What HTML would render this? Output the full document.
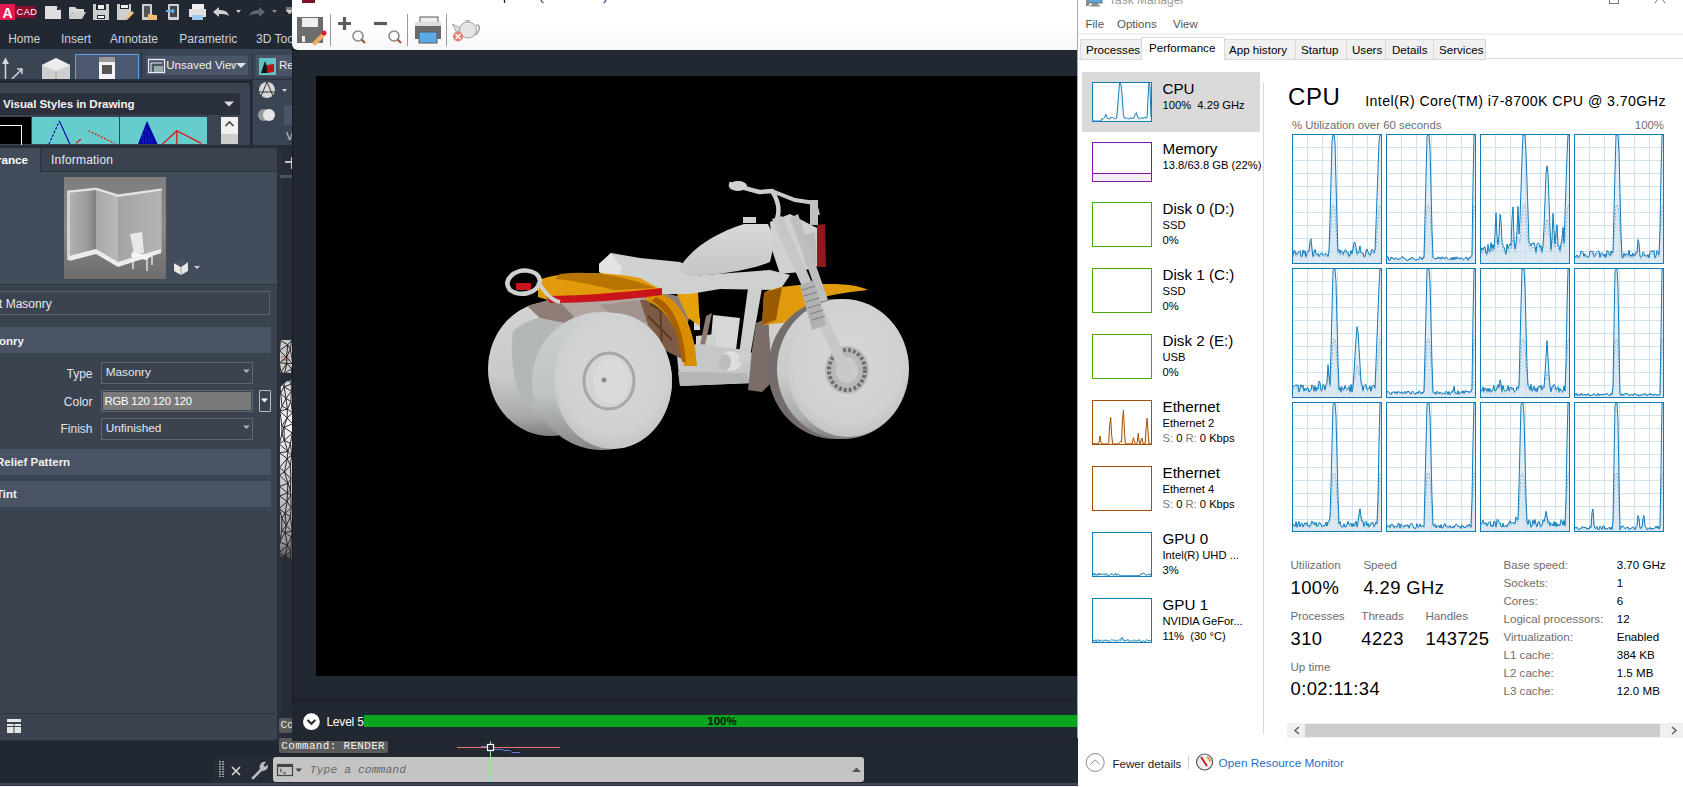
<!DOCTYPE html>
<html><head><meta charset="utf-8">
<style>
*{margin:0;padding:0;box-sizing:border-box}
html,body{width:1683px;height:787px;overflow:hidden;background:#212832;font-family:"Liberation Sans",sans-serif;position:relative}
.a{position:absolute}
.t{position:absolute;white-space:nowrap;line-height:1}
</style></head><body>
<div class="a" style="left:0px;top:0px;width:292px;height:787px;background:#212832;"></div>
<div class="a" style="left:0px;top:4px;width:15px;height:16px;background:#e51a4f;"></div>
<div class="t" style="top:5.6px;font-size:14px;color:#fff;left:2.5px;font-weight:bold;">A</div>
<div class="a" style="left:15px;top:6px;width:20px;height:12px;background:#8a0d2c;"></div>
<div class="t" style="top:8.0px;font-size:9.2px;color:#fff;left:16.5px;letter-spacing:0.5px;">CAD</div>
<svg class="a" style="left:0;top:0" width="300" height="26">
<!-- new -->
<path d="M45 6 H57 L61 10 V19 H45 Z" fill="#dedede"/><path d="M57 6 V10 H61" fill="#212832"/>
<!-- open -->
<path d="M69 7 H75 L77 9 H84 V12 H73 L69 19 Z" fill="#d8d8d8"/><path d="M73 12 H86 L82 19 H69 Z" fill="#cfcfcf"/>
<!-- save -->
<path d="M93 4 H109 V20 H93 Z" fill="#cfcfcf"/><rect x="96" y="4" width="10" height="6" fill="#212832"/><rect x="98" y="5" width="6" height="4" fill="#eee"/><rect x="97" y="15" width="8" height="4" fill="#212832"/><rect x="98" y="16" width="6" height="2" fill="#fff"/>
<!-- save as -->
<path d="M117 4 H131 V14 L126 20 H117 Z" fill="#cfcfcf"/><rect x="120" y="4" width="9" height="5" fill="#212832"/><rect x="121" y="5" width="7" height="3" fill="#eee"/><path d="M125 19 L132 11 L134 13 L127 20 Z" fill="#f0c070"/>
<!-- open from mobile -->
<rect x="142" y="4" width="10" height="16" rx="1" fill="#cfcfcf"/><rect x="144" y="6" width="6" height="11" fill="#555"/><path d="M148 14 H152 L153 15 H157 V20 H148 Z" fill="#f0c070"/>
<!-- save to mobile -->
<rect x="168" y="4" width="11" height="16" rx="1" fill="#cfcfcf"/><rect x="170" y="6" width="7" height="11" fill="#444"/><path d="M166 10 H172 V8 L175 11 L172 14 V12 H166 Z" fill="#5ab4f0"/>
<!-- print -->
<rect x="192" y="4" width="12" height="5" fill="#eee"/><rect x="189" y="9" width="17" height="8" fill="#e0e0e0"/><rect x="192" y="15" width="11" height="5" fill="#9ec8ee"/>
<!-- undo -->
<path d="M213 12 L219 7 V10 C225 10 228 12 229 16 C226 14 223 14 219 14 V17 Z" fill="#cfcfcf"/>
<path d="M236 10 H241 L238.5 13 Z" fill="#cfcfcf"/>
<path d="M265 12 L259 7 V10 C253 10 250 12 249 16 C252 14 255 14 259 14 V17 Z" fill="#5f6672"/>
<path d="M272 10 H277 L274.5 13 Z" fill="#8a909a"/>
<path d="M286 8 H293 M286 10 H293 L289.5 14 Z" stroke="#cfcfcf" fill="#cfcfcf" stroke-width="1"/>
</svg>
<div class="t" style="top:32.7px;font-size:12px;color:#ccd3de;left:8.2px;">Home</div>
<div class="t" style="top:32.7px;font-size:12px;color:#ccd3de;left:61px;">Insert</div>
<div class="t" style="top:32.7px;font-size:12px;color:#ccd3de;left:110px;">Annotate</div>
<div class="t" style="top:32.7px;font-size:12px;color:#ccd3de;left:179.3px;">Parametric</div>
<div class="t" style="top:32.7px;font-size:12px;color:#ccd3de;left:256px;">3D Tools</div>
<div class="a" style="left:0px;top:49px;width:292px;height:31px;background:#3b4453;"></div>
<div class="a" style="left:0px;top:79px;width:292px;height:2px;background:#2a303b;"></div>
<div class="a" style="left:141px;top:52px;width:1px;height:28px;background:#2b313c;"></div>
<div class="a" style="left:253px;top:80px;width:39px;height:65px;background:#3b4453;"></div>
<div class="a" style="left:252px;top:52px;width:1px;height:93px;background:#2b313c;"></div>
<svg class="a" style="left:0;top:49px" width="292" height="30">
<path d="M5.5 30 V12" stroke="#d8d8d8" stroke-width="1.5"/><path d="M2 15 L5.5 8.5 L9 15 Z" fill="#d8d8d8"/>
<path d="M12 30 L21 21 M17 20 H22 V25" stroke="#d8d8d8" stroke-width="1.5" fill="none"/>
<path d="M42 16 L56 9 L70 16 V31 H42 Z" fill="#d0d0d0"/><path d="M42 16 L56 22 L70 16 L56 9 Z" fill="#ececec"/><path d="M56 22 V31" stroke="#9a9a9a"/>
<rect x="75.5" y="5.5" width="63" height="30" fill="#4b5870" stroke="#5aa2e6"/>
<rect x="99" y="8" width="16" height="23" fill="#f4f4f4"/><rect x="99" y="8" width="16" height="5" fill="#999"/><rect x="102" y="16" width="10" height="9" fill="#555"/>
</svg>
<div class="a" style="left:145px;top:55px;width:104px;height:21px;background:#4a5568;border:1px dotted #2e3440"></div>
<svg class="a" style="left:148px;top:58px" width="18" height="16"><rect x="0.5" y="1.5" width="16" height="13" fill="none" stroke="#eee" stroke-width="1.3"/><path d="M3 14 V5 H14" stroke="#eee" fill="none"/><rect x="6" y="8" width="9" height="6" fill="#9aa"/></svg>
<div class="t" style="top:59.7px;font-size:11.5px;color:#eef0f4;left:166.3px;width:70px;overflow:hidden;">Unsaved View</div>
<svg class="a" style="left:236px;top:63px" width="12" height="6"><path d="M0 0 H10 L5 5 Z" fill="#dfe3ea"/></svg>
<div class="a" style="left:256px;top:55px;width:36px;height:21px;background:#4a5568;"></div>
<svg class="a" style="left:259px;top:58px" width="17" height="17"><rect width="17" height="17" fill="#5fc3c8"/><path d="M2 15 L6 3 L10 15 Z" fill="#111"/><path d="M8 7 L15 6 V14 L8 15 Z" fill="#c0141a"/><path d="M8 7 V15" stroke="#333"/></svg>
<div class="t" style="top:59.7px;font-size:11.5px;color:#eef0f4;left:279px;">Re</div>
<div class="a" style="left:-6px;top:83px;width:256px;height:64px;background:#3b4453;border-radius:4px"></div>
<div class="a" style="left:0px;top:93px;width:240px;height:22px;background:#2b313c;border-top-right-radius:2px"></div>
<div class="t" style="top:97.9px;font-size:11.6px;color:#f2f2f2;left:3px;font-weight:bold;letter-spacing:-0.1px;">Visual Styles in Drawing</div>
<svg class="a" style="left:224px;top:101px" width="11" height="7"><path d="M0 0.5 H10 L5 5.5 Z" fill="#d8dce2"/></svg>
<div class="a" style="left:0px;top:117px;width:31px;height:27px;background:#000;"></div>
<div class="a" style="left:-2px;top:125px;width:24px;height:22px;border:1.3px solid #fff"></div>
<svg class="a" style="left:32px;top:117px" width="175" height="27">
<rect x="0" y="0" width="87" height="27" fill="#66cccc"/>
<rect x="88" y="0" width="87" height="27" fill="#66cccc"/>
<path d="M17 27 L27.4 4" stroke="#0000aa" stroke-width="1.1" stroke-dasharray="2.5,1.5"/>
<path d="M27.4 4 L37.8 27" stroke="#0000aa" stroke-width="1.1"/>
<path d="M56.4 13.7 L82.4 26.4" stroke="#e01010" stroke-width="1.2" stroke-dasharray="2,1.5"/>
<path d="M43.8 26.4 L49 22" stroke="#e01010" stroke-width="1.2"/>
<path d="M106 27 L115 4 L125.5 27 Z" fill="#0000aa"/>
<path d="M111 18 V27 M114 12 V27 M117 14 V27 M120 20 V27" stroke="#5a8ad0" stroke-width="0.7" stroke-dasharray="1,1.2"/>
<path d="M130.7 27 L144.8 13.7 L169.3 26.4 M144.8 13.7 V27" stroke="#e01010" stroke-width="1.2" fill="none"/>
</svg>
<div class="a" style="left:221px;top:117px;width:17px;height:27px;background:#f0f0f0;"></div>
<div class="a" style="left:221px;top:134px;width:17px;height:10px;background:#cdcdcd;"></div>
<svg class="a" style="left:224px;top:120px" width="11" height="8"><path d="M1.5 6 L5.5 2 L9.5 6" stroke="#444" stroke-width="1.6" fill="none"/></svg>
<svg class="a" style="left:256px;top:80px" width="36" height="70">
<circle cx="11" cy="10" r="8" fill="#d8d8d8"/><path d="M3 12 H19 M11 2 L5 16 M11 2 L17 16" stroke="#333" stroke-width="1" fill="none"/>
<path d="M26 9 H31 L28.5 12 Z" fill="#cfcfcf"/>
<circle cx="8" cy="35" r="6" fill="#9a9a9a"/><circle cx="13" cy="35" r="6" fill="#e6e6e6"/>
<rect x="28" y="25" width="8" height="20" fill="#4b5568"/>
</svg>
<div class="t" style="top:130.7px;font-size:11px;color:#c8d0dc;left:286px;">V</div>
<div class="a" style="left:0px;top:145px;width:281px;height:598px;background:#2a303b;border-top-right-radius:5px;border-bottom-right-radius:5px"></div>
<div class="a" style="left:0px;top:148px;width:277px;height:592px;background:#3b4350;border-top-right-radius:4px;border-bottom-right-radius:4px"></div>
<div class="a" style="left:0px;top:148px;width:277px;height:23px;background:#3a4250;border-top-right-radius:4px"></div>
<div class="a" style="left:0px;top:171px;width:277px;height:1px;background:#2c323d;"></div>
<div class="a" style="left:0px;top:148px;width:40px;height:25px;background:#434c5b;"></div>
<div class="a" style="left:40px;top:148px;width:1px;height:24px;background:#2c323d;"></div>
<div class="a" style="left:0px;top:172px;width:277px;height:112px;background:#434c5b;"></div>
<div class="a" style="left:0px;top:284px;width:277px;height:1px;background:#2f3540;"></div>
<div class="t" style="top:154.4px;font-size:11.6px;color:#ffffff;left:-3px;font-weight:bold;">rance</div>
<div class="t" style="top:154.0px;font-size:12px;color:#e6e8ec;left:51px;letter-spacing:0.2px;">Information</div>
<svg class="a" style="left:64px;top:177px" width="102" height="102">
<defs><linearGradient id="fl" x1="0" y1="0" x2="0" y2="1"><stop offset="0" stop-color="#7e7e7e"/><stop offset="0.5" stop-color="#8a8a8a"/><stop offset="1" stop-color="#6c6c6c"/></linearGradient>
<linearGradient id="w1" x1="0" y1="0" x2="1" y2="0"><stop offset="0" stop-color="#b4b4b4"/><stop offset="0.7" stop-color="#9c9c9c"/><stop offset="1" stop-color="#7e7e7e"/></linearGradient>
<linearGradient id="w2" x1="0" y1="0" x2="1" y2="0"><stop offset="0" stop-color="#a8a8a8"/><stop offset="1" stop-color="#b8b8b8"/></linearGradient>
<linearGradient id="w3" x1="0" y1="0" x2="1" y2="0"><stop offset="0" stop-color="#a4a4a4"/><stop offset="1" stop-color="#b4b4b4"/></linearGradient></defs>
<rect width="102" height="102" fill="url(#fl)"/>
<path d="M3 13.7 L32 10.7 V76 L5.3 83 Z" fill="url(#w1)"/>
<path d="M32 10.7 L54 17.5 V89 L32 76 Z" fill="url(#w2)"/>
<path d="M54 17.5 L97.6 11.4 V76 L54 89 Z" fill="url(#w3)"/>
<path d="M3 13.7 L32 10.7 L54 17.5 L97.6 11.4 L97.6 13.5 L54 20 L32 13 L3 16 Z" fill="#e4e4e4"/>
<path d="M3 14 V83 H6 V16 Z" fill="#d4d4d4"/>
<path d="M5 79 L32 72 L54 85 L97 72 V76 L54 90 L32 77 L5.3 84 Z" fill="#ececec"/>
<path d="M66 57 L78 55 L80 76 L70 77 Z" fill="#e8e8e8"/>
<path d="M68 75 L88 79 L82 83 L67 80 Z" fill="#f4f4f4"/>
<path d="M69 80 V92 M83 82 V94 M88 79 V88" stroke="#f0f0f0" stroke-width="1.3"/>
</svg>
<svg class="a" style="left:173px;top:258px" width="30" height="18"><path d="M1 5 L8 9 L15 4 V13 L8 17 L1 13 Z" fill="#e8e8e8"/><path d="M8 9 V17" stroke="#9a9a9a"/><path d="M1 5 L8 2 L15 4 L8 9 Z" fill="#4a5364"/><path d="M21 8 H27 L24 11 Z" fill="#cfcfcf"/></svg>
<div class="a" style="left:-2px;top:291px;width:272px;height:24px;border:1px solid #5a6272"></div>
<div class="t" style="top:298.3px;font-size:12px;color:#e6e8ec;left:-1px;">t Masonry</div>
<div class="a" style="left:0px;top:327px;width:271px;height:26px;background:#4a5364;"></div>
<div class="t" style="top:336.1px;font-size:11.5px;color:#f2f2f2;left:-1px;font-weight:bold;">onry</div>
<div class="t" style="top:368.0px;font-size:12px;color:#e0e3e8;right:1590.5px;">Type</div>
<div class="t" style="top:395.5px;font-size:12px;color:#e0e3e8;right:1590.5px;">Color</div>
<div class="t" style="top:423.3px;font-size:12px;color:#e0e3e8;right:1590.5px;">Finish</div>
<div class="a" style="left:101px;top:362px;width:152px;height:22px;border:1px solid #5f6776"></div>
<div class="t" style="top:367.2px;font-size:11.8px;color:#e6e8ec;left:105.7px;">Masonry</div>
<div class="a" style="left:101px;top:390px;width:152px;height:22px;border:1px solid #5f6776;background:#3b4350"></div>
<div class="a" style="left:103px;top:392px;width:148px;height:18px;background:#7a7a7a;"></div>
<div class="t" style="top:396.4px;font-size:11.3px;color:#fff;left:104.5px;letter-spacing:-0.2px;">RGB 120 120 120</div>
<div class="a" style="left:258.5px;top:390px;width:12px;height:22px;border:1px solid #b8bcc4;border-radius:1px"></div>
<svg class="a" style="left:258px;top:397px" width="13" height="8"><path d="M3 1.5 H10 L6.5 5.5 Z" fill="#fff"/></svg>
<div class="a" style="left:101px;top:418px;width:152px;height:22px;border:1px solid #5f6776"></div>
<div class="t" style="top:423.0px;font-size:11.8px;color:#e6e8ec;left:105.7px;">Unfinished</div>
<svg class="a" style="left:243px;top:369px" width="8" height="5"><path d="M0 0.5 H7 L3.5 4 Z" fill="#a8acb4"/></svg>
<svg class="a" style="left:243px;top:425px" width="8" height="5"><path d="M0 0.5 H7 L3.5 4 Z" fill="#a8acb4"/></svg>
<div class="a" style="left:0px;top:449px;width:271px;height:26px;background:#4a5364;"></div>
<div class="t" style="top:457.3px;font-size:11.5px;color:#f2f2f2;left:-4px;font-weight:bold;">Relief Pattern</div>
<div class="a" style="left:0px;top:481px;width:271px;height:26px;background:#4a5364;"></div>
<div class="t" style="top:489.3px;font-size:11.5px;color:#f2f2f2;left:-4px;font-weight:bold;">Tint</div>
<div class="a" style="left:0px;top:713px;width:274px;height:1px;background:#2f3540;"></div>
<svg class="a" style="left:6px;top:718px" width="16" height="16"><rect x="1" y="1" width="14" height="3" fill="#e6e6e6"/><rect x="1" y="6" width="14" height="9" fill="#e6e6e6"/><path d="M8 6 V15 M1 8.5 H15" stroke="#3b4350" stroke-width="1"/></svg>
<div class="a" style="left:281px;top:145px;width:11px;height:597px;background:#262d38;"></div>
<svg class="a" style="left:284px;top:156px" width="9" height="14"><path d="M1 6 H8 M8 1 V13" stroke="#f0f0f0" stroke-width="1.6"/></svg>
<div class="a" style="left:280px;top:175px;width:12px;height:3px;background:#4a5364;"></div>
<svg class="a" style="left:280px;top:340px" width="12" height="220"><defs><linearGradient id="wg" x1="0" y1="0" x2="0" y2="1"><stop offset="0" stop-color="#d8d8d8"/><stop offset="0.25" stop-color="#f4f4f4"/><stop offset="0.6" stop-color="#c8c8c8"/><stop offset="0.9" stop-color="#9a9a9a"/><stop offset="1" stop-color="#555"/></linearGradient></defs><rect x="0" y="0" width="12" height="33" fill="#c9c9c9"/><path d="M1 17 H9 M2 20 H10" stroke="#b06050" stroke-width="1.2"/><path d="M0 48 Q3 42 12 40 V219 L0 216 Z" fill="url(#wg)"/><clipPath id="wc1"><rect x="0" y="0" width="12" height="33"/></clipPath><clipPath id="wc2"><path d="M0 48 Q3 42 12 40 V219 L0 216 Z"/></clipPath><g clip-path="url(#wc1)"><path d="M0.4 0.4 L-0.4 10.6 M7.7 4.8 L6.5 17.3 M11.5 0.5 L10.3 9.3 M0.4 0.4 L7.7 4.8 L11.5 0.5 M7.7 4.8 L-0.4 10.6 M7.7 4.8 L10.3 9.3 M-0.4 10.6 L-0.7 22.9 M6.5 17.3 L6.8 23.3 M10.3 9.3 L12.9 23.8 M-0.4 10.6 L6.5 17.3 L10.3 9.3 M6.5 17.3 L-0.7 22.9 M6.5 17.3 L12.9 23.8 M-0.7 22.9 L1.0 32.2 M6.8 23.3 L4.6 33.6 M12.9 23.8 L11.6 28.9 M-0.7 22.9 L6.8 23.3 L12.9 23.8 M6.8 23.3 L1.0 32.2 M6.8 23.3 L11.6 28.9 M1.0 32.2 L-0.4 40.5 M4.6 33.6 L4.1 46.8 M11.6 28.9 L11.3 44.1 M1.0 32.2 L4.6 33.6 L11.6 28.9 M4.6 33.6 L-0.4 40.5 M4.6 33.6 L11.3 44.1 M-0.4 40.5 L0.6 53.3 M4.1 46.8 L6.0 58.5 M11.3 44.1 L11.4 51.2 M-0.4 40.5 L4.1 46.8 L11.3 44.1 M4.1 46.8 L0.6 53.3 M4.1 46.8 L11.4 51.2 M0.6 53.3 L2.0 66.0 M6.0 58.5 L7.4 69.2 M11.4 51.2 L10.9 61.4 M0.6 53.3 L6.0 58.5 L11.4 51.2 M6.0 58.5 L2.0 66.0 M6.0 58.5 L10.9 61.4 M2.0 66.0 L-0.1 70.9 M7.4 69.2 L7.1 77.9 M10.9 61.4 L12.5 72.8 M2.0 66.0 L7.4 69.2 L10.9 61.4 M7.4 69.2 L-0.1 70.9 M7.4 69.2 L12.5 72.8 M-0.1 70.9 L1.9 86.1 M7.1 77.9 L4.0 87.3 M12.5 72.8 L12.7 83.8 M-0.1 70.9 L7.1 77.9 L12.5 72.8 M7.1 77.9 L1.9 86.1 M7.1 77.9 L12.7 83.8 M1.9 86.1 L1.9 93.9 M4.0 87.3 L4.3 100.3 M12.7 83.8 L12.3 93.1 M1.9 86.1 L4.0 87.3 L12.7 83.8 M4.0 87.3 L1.9 93.9 M4.0 87.3 L12.3 93.1 M1.9 93.9 L-0.7 104.0 M4.3 100.3 L7.9 111.5 M12.3 93.1 L10.4 103.5 M1.9 93.9 L4.3 100.3 L12.3 93.1 M4.3 100.3 L-0.7 104.0 M4.3 100.3 L10.4 103.5 M-0.7 104.0 L-0.7 112.9 M7.9 111.5 L7.2 118.6 M10.4 103.5 L11.7 115.2 M-0.7 104.0 L7.9 111.5 L10.4 103.5 M7.9 111.5 L-0.7 112.9 M7.9 111.5 L11.7 115.2 M-0.7 112.9 L-0.4 127.4 M7.2 118.6 L4.5 131.9 M11.7 115.2 L10.3 125.5 M-0.7 112.9 L7.2 118.6 L11.7 115.2 M7.2 118.6 L-0.4 127.4 M7.2 118.6 L10.3 125.5 M-0.4 127.4 L-0.4 135.1 M4.5 131.9 L7.9 143.3 M10.3 125.5 L10.9 138.8 M-0.4 127.4 L4.5 131.9 L10.3 125.5 M4.5 131.9 L-0.4 135.1 M4.5 131.9 L10.9 138.8 M-0.4 135.1 L-0.4 146.4 M7.9 143.3 L7.4 152.9 M10.9 138.8 L10.3 149.9 M-0.4 135.1 L7.9 143.3 L10.9 138.8 M7.9 143.3 L-0.4 146.4 M7.9 143.3 L10.3 149.9 M-0.4 146.4 L-0.4 156.0 M7.4 152.9 L7.1 161.5 M10.3 149.9 L10.9 154.9 M-0.4 146.4 L7.4 152.9 L10.3 149.9 M7.4 152.9 L-0.4 156.0 M7.4 152.9 L10.9 154.9 M-0.4 156.0 L-0.7 168.5 M7.1 161.5 L5.0 173.6 M10.9 154.9 L11.1 167.7 M-0.4 156.0 L7.1 161.5 L10.9 154.9 M7.1 161.5 L-0.7 168.5 M7.1 161.5 L11.1 167.7 M-0.7 168.5 L1.9 178.4 M5.0 173.6 L6.3 185.7 M11.1 167.7 L10.5 176.4 M-0.7 168.5 L5.0 173.6 L11.1 167.7 M5.0 173.6 L1.9 178.4 M5.0 173.6 L10.5 176.4 M1.9 178.4 L1.7 190.9 M6.3 185.7 L5.0 192.1 M10.5 176.4 L12.2 191.6 M1.9 178.4 L6.3 185.7 L10.5 176.4 M6.3 185.7 L1.7 190.9 M6.3 185.7 L12.2 191.6 M1.7 190.9 L-0.4 202.2 M5.0 192.1 L7.5 205.1 M12.2 191.6 L11.3 197.1 M1.7 190.9 L5.0 192.1 L12.2 191.6 M5.0 192.1 L-0.4 202.2 M5.0 192.1 L11.3 197.1 M-0.4 202.2 L-0.9 212.8 M7.5 205.1 L5.0 216.2 M11.3 197.1 L10.8 211.9 M-0.4 202.2 L7.5 205.1 L11.3 197.1 M7.5 205.1 L-0.9 212.8 M7.5 205.1 L10.8 211.9 M-0.9 212.8 L0.8 219.3 M5.0 216.2 L4.7 226.8 M10.8 211.9 L10.2 218.9 M-0.9 212.8 L5.0 216.2 L10.8 211.9 M5.0 216.2 L0.8 219.3 M5.0 216.2 L10.2 218.9 " stroke="#151515" stroke-width="0.9" fill="none"/></g><g clip-path="url(#wc2)"><path d="M0.4 0.4 L-0.4 10.6 M7.7 4.8 L6.5 17.3 M11.5 0.5 L10.3 9.3 M0.4 0.4 L7.7 4.8 L11.5 0.5 M7.7 4.8 L-0.4 10.6 M7.7 4.8 L10.3 9.3 M-0.4 10.6 L-0.7 22.9 M6.5 17.3 L6.8 23.3 M10.3 9.3 L12.9 23.8 M-0.4 10.6 L6.5 17.3 L10.3 9.3 M6.5 17.3 L-0.7 22.9 M6.5 17.3 L12.9 23.8 M-0.7 22.9 L1.0 32.2 M6.8 23.3 L4.6 33.6 M12.9 23.8 L11.6 28.9 M-0.7 22.9 L6.8 23.3 L12.9 23.8 M6.8 23.3 L1.0 32.2 M6.8 23.3 L11.6 28.9 M1.0 32.2 L-0.4 40.5 M4.6 33.6 L4.1 46.8 M11.6 28.9 L11.3 44.1 M1.0 32.2 L4.6 33.6 L11.6 28.9 M4.6 33.6 L-0.4 40.5 M4.6 33.6 L11.3 44.1 M-0.4 40.5 L0.6 53.3 M4.1 46.8 L6.0 58.5 M11.3 44.1 L11.4 51.2 M-0.4 40.5 L4.1 46.8 L11.3 44.1 M4.1 46.8 L0.6 53.3 M4.1 46.8 L11.4 51.2 M0.6 53.3 L2.0 66.0 M6.0 58.5 L7.4 69.2 M11.4 51.2 L10.9 61.4 M0.6 53.3 L6.0 58.5 L11.4 51.2 M6.0 58.5 L2.0 66.0 M6.0 58.5 L10.9 61.4 M2.0 66.0 L-0.1 70.9 M7.4 69.2 L7.1 77.9 M10.9 61.4 L12.5 72.8 M2.0 66.0 L7.4 69.2 L10.9 61.4 M7.4 69.2 L-0.1 70.9 M7.4 69.2 L12.5 72.8 M-0.1 70.9 L1.9 86.1 M7.1 77.9 L4.0 87.3 M12.5 72.8 L12.7 83.8 M-0.1 70.9 L7.1 77.9 L12.5 72.8 M7.1 77.9 L1.9 86.1 M7.1 77.9 L12.7 83.8 M1.9 86.1 L1.9 93.9 M4.0 87.3 L4.3 100.3 M12.7 83.8 L12.3 93.1 M1.9 86.1 L4.0 87.3 L12.7 83.8 M4.0 87.3 L1.9 93.9 M4.0 87.3 L12.3 93.1 M1.9 93.9 L-0.7 104.0 M4.3 100.3 L7.9 111.5 M12.3 93.1 L10.4 103.5 M1.9 93.9 L4.3 100.3 L12.3 93.1 M4.3 100.3 L-0.7 104.0 M4.3 100.3 L10.4 103.5 M-0.7 104.0 L-0.7 112.9 M7.9 111.5 L7.2 118.6 M10.4 103.5 L11.7 115.2 M-0.7 104.0 L7.9 111.5 L10.4 103.5 M7.9 111.5 L-0.7 112.9 M7.9 111.5 L11.7 115.2 M-0.7 112.9 L-0.4 127.4 M7.2 118.6 L4.5 131.9 M11.7 115.2 L10.3 125.5 M-0.7 112.9 L7.2 118.6 L11.7 115.2 M7.2 118.6 L-0.4 127.4 M7.2 118.6 L10.3 125.5 M-0.4 127.4 L-0.4 135.1 M4.5 131.9 L7.9 143.3 M10.3 125.5 L10.9 138.8 M-0.4 127.4 L4.5 131.9 L10.3 125.5 M4.5 131.9 L-0.4 135.1 M4.5 131.9 L10.9 138.8 M-0.4 135.1 L-0.4 146.4 M7.9 143.3 L7.4 152.9 M10.9 138.8 L10.3 149.9 M-0.4 135.1 L7.9 143.3 L10.9 138.8 M7.9 143.3 L-0.4 146.4 M7.9 143.3 L10.3 149.9 M-0.4 146.4 L-0.4 156.0 M7.4 152.9 L7.1 161.5 M10.3 149.9 L10.9 154.9 M-0.4 146.4 L7.4 152.9 L10.3 149.9 M7.4 152.9 L-0.4 156.0 M7.4 152.9 L10.9 154.9 M-0.4 156.0 L-0.7 168.5 M7.1 161.5 L5.0 173.6 M10.9 154.9 L11.1 167.7 M-0.4 156.0 L7.1 161.5 L10.9 154.9 M7.1 161.5 L-0.7 168.5 M7.1 161.5 L11.1 167.7 M-0.7 168.5 L1.9 178.4 M5.0 173.6 L6.3 185.7 M11.1 167.7 L10.5 176.4 M-0.7 168.5 L5.0 173.6 L11.1 167.7 M5.0 173.6 L1.9 178.4 M5.0 173.6 L10.5 176.4 M1.9 178.4 L1.7 190.9 M6.3 185.7 L5.0 192.1 M10.5 176.4 L12.2 191.6 M1.9 178.4 L6.3 185.7 L10.5 176.4 M6.3 185.7 L1.7 190.9 M6.3 185.7 L12.2 191.6 M1.7 190.9 L-0.4 202.2 M5.0 192.1 L7.5 205.1 M12.2 191.6 L11.3 197.1 M1.7 190.9 L5.0 192.1 L12.2 191.6 M5.0 192.1 L-0.4 202.2 M5.0 192.1 L11.3 197.1 M-0.4 202.2 L-0.9 212.8 M7.5 205.1 L5.0 216.2 M11.3 197.1 L10.8 211.9 M-0.4 202.2 L7.5 205.1 L11.3 197.1 M7.5 205.1 L-0.9 212.8 M7.5 205.1 L10.8 211.9 M-0.9 212.8 L0.8 219.3 M5.0 216.2 L4.7 226.8 M10.8 211.9 L10.2 218.9 M-0.9 212.8 L5.0 216.2 L10.8 211.9 M5.0 216.2 L0.8 219.3 M5.0 216.2 L10.2 218.9 " stroke="#151515" stroke-width="0.9" fill="none"/></g></svg>
<div class="a" style="left:279px;top:718px;width:13px;height:15px;background:#595959;border-radius:2px"></div>
<div class="t" style="top:720.2px;font-size:11px;color:#e8e8e8;left:280.5px;font-family:'Liberation Mono',monospace;">Co</div>
<div class="a" style="left:0px;top:741px;width:1078px;height:46px;background:#212832;"></div>
<div class="a" style="left:0px;top:783px;width:1078px;height:2px;background:#3e4555;"></div>
<div class="a" style="left:0px;top:785px;width:1078px;height:1px;background:#313849;"></div>
<div class="a" style="left:0px;top:786px;width:1078px;height:1px;background:#f4f4f4;"></div>
<div class="a" style="left:279px;top:738px;width:109px;height:15px;background:#5b5b5b;border-radius:2px"></div>
<div class="t" style="top:741.4px;font-size:10.9px;color:#f4f4f4;left:281.3px;font-family:'Liberation Mono',monospace;letter-spacing:0.38px;">Command: RENDER</div>
<div class="a" style="left:214px;top:756px;width:59px;height:27px;background:#262c36"></div>
<svg class="a" style="left:214px;top:756px" width="60" height="28">
<path d="M6 5 V21 M9 5 V21" stroke="#c8c8c8" stroke-width="1.5" stroke-dasharray="1.5,1"/>
<path d="M18 11 L26 19 M26 11 L18 19" stroke="#d8d8d8" stroke-width="1.6"/>
<path d="M39 22 L48 13" stroke="#bdbdbd" stroke-width="2.6" stroke-linecap="round"/><path d="M46.5 14.5 C44 10 47 5 52 6 L49.5 9 L51 11 L53.5 8.5 C55 13 51 16 46.5 14.5 Z" fill="#bdbdbd"/>
</svg>
<div class="a" style="left:273px;top:757px;width:591px;height:25px;background:#c4c4c4;border-radius:3px"></div>
<svg class="a" style="left:276px;top:762px" width="30" height="16"><rect x="1.5" y="2.5" width="15" height="11" fill="#c4c4c4" stroke="#444" stroke-width="1.2"/><rect x="1.5" y="2.5" width="15" height="2.5" fill="#444"/><path d="M4 7 L6 8.5 L4 10 M7 11 H10" stroke="#333" stroke-width="1" fill="none"/><path d="M19.5 6.5 H26 L22.75 10 Z" fill="#444"/></svg>
<div class="t" style="top:764.6px;font-size:11.3px;color:#666;left:309.8px;font-family:'Liberation Mono',monospace;font-style:italic;letter-spacing:0.1px;">Type a command</div>
<svg class="a" style="left:851px;top:766px" width="12" height="8"><path d="M1 6 H10 L5.5 1.5 Z" fill="#555"/></svg>
<svg class="a" style="left:450px;top:735px" width="120" height="47"><path d="M7 12.5 H110" stroke="#f07070" stroke-width="1"/><path d="M40.5 6 V47" stroke="#9ae39a" stroke-width="1"/><path d="M31 11.5 H37 M44 14.5 H52 L54 15.5 H60 L62 17.5 H70" stroke="#6a7adf" stroke-width="1"/><rect x="37.5" y="9.5" width="6" height="6" fill="#212832" stroke="#fff" stroke-width="1.2"/></svg>
<div class="a" style="left:292px;top:0px;width:786px;height:741px;background:#212832;"></div>
<div class="a" style="left:292px;top:49px;width:786px;height:652px;border-left:1px dotted #0b0d10;border-bottom:1px dotted #0b0d10;border-top:1px dotted #0b0d10"></div>
<div class="a" style="left:292px;top:0;width:786px;height:50px;background:linear-gradient(#ffffff 0,#ffffff 55%,#fcf9fc 80%,#f6f6f6 100%);border-bottom-left-radius:6px"></div>
<div class="a" style="left:302px;top:0;width:13px;height:3px;background:#7c1224"></div>
<svg class="a" style="left:500px;top:0" width="120" height="4"><path d="M4.5 0 V3" stroke="#3a1050" stroke-width="1.3"/><path d="M41 0 Q41.5 2.5 43.5 3" stroke="#1a3a9a" stroke-width="1.2" fill="none"/><path d="M106 0 Q105.5 2.5 103.5 3" stroke="#1a3a9a" stroke-width="1.2" fill="none"/></svg>
<svg class="a" style="left:292px;top:0" width="200" height="50">
<g>
 <path d="M5 17 H31 V43 H5 Z" fill="#6d6d6d"/>
 <rect x="10" y="18" width="16" height="9" fill="#eeeeee"/>
 <rect x="10" y="36" width="3" height="6" fill="#eeeeee"/>
 <path d="M20 43 L30 33 L33 36 L23 46 Z" fill="#f0b060"/>
 <circle cx="32" cy="33" r="2.5" fill="#e02030"/>
</g>
<rect x="38" y="14" width="1" height="32" fill="#9a9a9a"/>
<path d="M46 23.5 H59 M52.5 17 V30" stroke="#5a5a5a" stroke-width="3.2"/>
<circle cx="66" cy="36" r="5" fill="none" stroke="#8a8a8a" stroke-width="1.6"/>
<path d="M69.5 39.5 L73 43" stroke="#a0522d" stroke-width="2"/>
<path d="M82 23.5 H95" stroke="#5a5a5a" stroke-width="3.2"/>
<circle cx="102" cy="36" r="5" fill="none" stroke="#8a8a8a" stroke-width="1.6"/>
<path d="M105.5 39.5 L109 43" stroke="#a0522d" stroke-width="2"/>
<rect x="115" y="14" width="1" height="32" fill="#9a9a9a"/>
<g>
 <rect x="128" y="17" width="18" height="9" fill="#eeeeee" stroke="#5a5a5a" stroke-width="1"/>
 <rect x="123" y="25" width="26" height="14" fill="#6a6a6a"/>
 <rect x="123" y="22" width="26" height="4" fill="#dddddd"/>
 <rect x="127" y="32" width="18" height="11" fill="#5aaae8" stroke="#5a5a5a"/>
</g>
<rect x="154" y="14" width="1" height="32" fill="#9a9a9a"/>
<g>
 <ellipse cx="176" cy="30" rx="8.5" ry="8" fill="#e6e6e6" stroke="#a0a0a0"/>
 <path d="M168 28 L160.5 24 L166 35 Z" fill="#e0e0e0" stroke="#a0a0a0"/>
 <path d="M184 25 C189 24 188 32 183 35" fill="none" stroke="#a0a0a0" stroke-width="1.5"/>
 <rect x="173" y="20" width="5" height="3" fill="#bbb"/>
 <circle cx="166" cy="36.5" r="5" fill="#e08070"/>
 <path d="M163.5 34 L168.5 39 M168.5 34 L163.5 39" stroke="#fff" stroke-width="1.3"/>
</g>
</svg>
<div class="a" style="left:316px;top:76px;width:762px;height:600px;background:#000;"></div>
<svg class="a" style="left:460px;top:160px" width="480" height="310" viewBox="460 160 480 310">
<defs>
<linearGradient id="tr" x1="0" y1="0" x2="0" y2="1"><stop offset="0" stop-color="#d2d4d4"/><stop offset="0.55" stop-color="#c9cbcb"/><stop offset="0.85" stop-color="#a9abab"/><stop offset="1" stop-color="#7e8080"/></linearGradient>
<linearGradient id="tr2" x1="0" y1="0" x2="0" y2="1"><stop offset="0" stop-color="#cdd0d0"/><stop offset="0.6" stop-color="#c0c3c3"/><stop offset="1" stop-color="#858787"/></linearGradient>
<radialGradient id="wf" cx="0.5" cy="0.42" r="0.62"><stop offset="0" stop-color="#d6d8d8"/><stop offset="0.75" stop-color="#cfd1d1"/><stop offset="0.93" stop-color="#c3c5c5"/><stop offset="1" stop-color="#a8aaaa"/></radialGradient>
<linearGradient id="tank" x1="0" y1="0" x2="0" y2="1"><stop offset="0" stop-color="#d8dada"/><stop offset="1" stop-color="#c4c6c6"/></linearGradient>
</defs>
<!-- back rear wheel -->
<ellipse cx="550" cy="369" rx="62" ry="67" fill="url(#tr)"/>
<path d="M513 331 C530 315 560 312 590 318 L585 420 C560 424 530 412 520 395 C512 375 510 350 513 331 Z" fill="#b4b7b7"/>
<!-- shading under rear fender -->
<polygon points="527,306 548,300 600,298 660,292 695,300 700,330 680,330 640,330 600,328 560,322 540,318" fill="#8e7e77"/>
<polygon points="560,302 640,298 672,300 660,325 600,324 575,318" fill="#b3a6a2"/>
<polygon points="600,305 640,300 655,318 630,330" fill="#a2938e"/>
<!-- engine & lower frame -->
<polygon points="684,336 697,291 747,291 744,354 730,356 700,350" fill="#000"/>
<polygon points="713,315 740,318 736,350 710,350" fill="#d6d8d8"/>
<polygon points="696,336 716,334 716,346 696,348" fill="#cfd1d1"/>
<rect x="694" y="318" width="6" height="12" fill="#d6d8d8"/>
<polygon points="706,316 712,313 704,350 699,350" fill="#8a7a72"/>
<polygon points="676,346 700,344 745,350 760,356 755,383 680,386" fill="#c6c8c8"/>
<polygon points="678,372 746,373 750,383 680,386" fill="#b4b6b6"/>
<ellipse cx="731" cy="361" rx="11" ry="10" fill="#dcdede"/>
<ellipse cx="725" cy="362" rx="6" ry="8" fill="#bcbebe"/>
<!-- rear swing arm (orange curved) -->
<polygon points="640,300 668,300 684,330 684,360 664,350 648,325" fill="#7d5a44"/>
<path d="M650,304 L676,318 M648,316 L672,340 M660,300 L662,352" stroke="#5e3a22" stroke-width="2"/>
<path d="M650,291 C675,292 694,318 697,366 L684,366 C681,334 668,308 645,300 Z" fill="#d88e00"/>
<path d="M656,297 C672,304 683,326 686,362 L682,362 C679,332 668,310 652,301 Z" fill="#a86000"/>
<polygon points="676,292 698,292 700,326 688,318" fill="#e6a00a"/>
<!-- downtube -->
<polygon points="748,288 762,288 749,362 738,362" fill="#cdcfcf"/>
<!-- front frame brown / light area -->
<polygon points="756,323 768,318 772,382 762,392 748,390 752,350" fill="#7b6d68"/>
<polygon points="768,318 800,305 790,380 772,382" fill="#d4cfcc"/>
<!-- front rear wheel -->
<ellipse cx="602" cy="381" rx="70" ry="69" fill="url(#tr2)"/>
<ellipse cx="613" cy="381" rx="59" ry="68" fill="url(#wf)"/>
<ellipse cx="609" cy="381" rx="25" ry="28" fill="none" stroke="#a6a8a8" stroke-width="3"/>
<ellipse cx="611" cy="381" rx="18" ry="23" fill="#d9dbdb"/>
<circle cx="604" cy="380" r="2.5" fill="#8a8c8c"/>
<!-- seat -->
<polygon points="599,264 611,253 640,258 680,262 700,272 690,294 640,292 620,282 599,272" fill="#d0d2d2"/>
<polygon points="611,253 622,268 618,280 599,272 599,264" fill="#e2e4e4"/>
<!-- main frame band under tank -->
<polygon points="640,282 690,276 770,270 790,275 780,290 720,289 690,294 640,294" fill="#cfd1d1"/>
<!-- tank -->
<path d="M678,270 C690,250 712,234 744,224 L768,224 L775,240 L770,262 C750,270 720,275 690,276 Z" fill="url(#tank)"/>
<rect x="743" y="217" width="13" height="6" fill="#cfd1d1"/>
<!-- headstock -->
<polygon points="770,222 790,214 817,228 817,266 800,272 780,274 772,250" fill="#cfd1d1"/><polygon points="800,236 815,232 817,262 806,266" fill="#b9bbbb"/>
<polygon points="817,225 825,224 826,267 817,267" fill="#8e1a20"/>
<!-- rear orange fender + red stripe -->
<path d="M538,280 C560,272 600,270 640,278 L662,290 L640,296 C600,296 570,298 548,300 L538,297 Z" fill="#e09a0c"/>
<path d="M560,274 C590,270 625,276 655,288 L615,290 C590,284 570,280 555,279 Z" fill="#b87400"/>
<path d="M546,296 C585,296 625,292 662,288 L662,295 C625,300 585,303 550,303 Z" fill="#c8141a"/>
<!-- grab handle loop -->
<path d="M511,276 C518,268 538,268 540,281 C538,294 520,297 510,290 C506,285 507,280 511,276 Z" fill="none" stroke="#cfd1d1" stroke-width="4.5"/>
<rect x="516" y="283" width="15" height="7" fill="#c8141a"/>
<path d="M538,282 C545,292 550,300 560,302" stroke="#cfd1d1" stroke-width="4" fill="none"/>
<!-- front fender -->
<path d="M762,325 L764,293 C775,286 800,284 830,284 C848,284 860,286 868,290 C850,292 835,294 824,297 L807,308 L790,322 Z" fill="#e09a0c"/>
<polygon points="764,293 782,287 776,320 762,325" fill="#9a5a00"/>
<!-- front wheel -->
<ellipse cx="835" cy="369" rx="67" ry="70" fill="#736e6b"/>
<ellipse cx="843" cy="369" rx="66" ry="70" fill="url(#tr)"/>
<ellipse cx="848" cy="369" rx="60" ry="68" fill="url(#wf)"/>
<ellipse cx="847" cy="370" rx="22" ry="24" fill="#b8baba"/>
<ellipse cx="847" cy="370" rx="18" ry="20" fill="none" stroke="#6e7070" stroke-width="4" stroke-dasharray="3,2"/>
<ellipse cx="847" cy="370" rx="11" ry="13" fill="#c9cbcb"/>
<!-- fork -->
<polygon points="772,219 782,216 852,372 842,376" fill="#c6c8c8"/>
<polygon points="790,218 798,214 828,300 820,302" fill="#bdbfbf"/>
<polygon points="800,285 814,280 826,325 812,330" fill="#b0b2b2"/>
<path d="M802,290 L815,286 M804,296 L817,292 M806,302 L819,298 M808,308 L821,304 M810,314 L823,310 M812,320 L825,316" stroke="#7a7c7c" stroke-width="1"/>
<!-- handlebar & mirrors -->
<path d="M729,184 C740,186 750,190 760,192 L772,191 C778,200 780,210 777,219" fill="none" stroke="#cdcfcf" stroke-width="4.5"/>
<ellipse cx="738" cy="186" rx="9" ry="5" fill="#d0d2d2"/>
<path d="M772,191 L795,200 L815,203 L818,215" fill="none" stroke="#c8caca" stroke-width="4"/>
<rect x="810" y="200" width="8" height="25" fill="#bfc1c1"/>
</svg>

<div class="a" style="left:292px;top:740px;width:786px;height:1px;background:#1c2129;"></div>
<svg class="a" style="left:302px;top:713px" width="20" height="18"><circle cx="9.4" cy="8.7" r="8.4" fill="#fff"/><path d="M5.5 7 L9.4 10.8 L13.3 7" fill="none" stroke="#212832" stroke-width="2"/></svg>
<div class="t" style="top:715.8px;font-size:12px;color:#fff;left:326.4px;letter-spacing:-0.2px;">Level 5</div>
<div class="a" style="left:364px;top:715px;width:714px;height:12px;background:#0aa51d;"></div>
<div class="t" style="top:716.3px;font-size:11.5px;color:#111;left:722px;font-weight:bold;transform:translateX(-50%);">100%</div>
<div class="a" style="left:1078px;top:0px;width:605px;height:787px;background:#fff;"></div>
<div class="a" style="left:1077px;top:0px;width:1px;height:738px;background:#a9a9a9;"></div>
<svg class="a" style="left:1085px;top:-8px" width="18" height="15" viewBox="0 0 18 15"><rect x="3" y="1" width="14" height="10" fill="#5aa9e6" stroke="#6d6d6d"/><rect x="1" y="2" width="3" height="12" fill="#8a8a8a"/><rect x="7" y="11" width="6" height="2" fill="#8a8a8a"/><rect x="5" y="13" width="10" height="1.5" fill="#8a8a8a"/></svg>
<div class="t" style="top:-6.2px;font-size:12px;color:#9a9a9a;left:1109px;">Task Manager</div>
<svg class="a" style="left:1608px;top:-7px" width="60" height="12"><rect x="1.5" y="1.5" width="9" height="9" fill="none" stroke="#777" stroke-width="1"/><path d="M47 -4 L57 10 M57 -4 L47 10" stroke="#777" stroke-width="1"/></svg>
<div class="t" style="top:18.7px;font-size:11.5px;color:#555;left:1085.5px;">File</div>
<div class="t" style="top:18.7px;font-size:11.5px;color:#555;left:1117px;">Options</div>
<div class="t" style="top:18.7px;font-size:11.5px;color:#555;left:1173px;">View</div>
<div class="a" style="left:1078px;top:33px;width:605px;height:2px;background:#f0f0f0;"></div>
<div class="a" style="left:1078px;top:58px;width:605px;height:1px;background:#d9d9d9;"></div>
<div class="a" style="left:1080px;top:39px;width:62px;height:21px;background:#f0f0f0;border:1px solid #d9d9d9"></div>
<div class="t" style="top:44.2px;font-size:11.6px;color:#000;left:1086px;">Processes</div>
<div class="a" style="left:1141px;top:37px;width:84px;height:23px;background:#fff;border:1px solid #d9d9d9;border-bottom:none"></div>
<div class="t" style="top:42.2px;font-size:11.6px;color:#000;left:1149px;">Performance</div>
<div class="a" style="left:1224px;top:39px;width:72px;height:21px;background:#f0f0f0;border:1px solid #d9d9d9"></div>
<div class="t" style="top:44.2px;font-size:11.6px;color:#000;left:1229px;">App history</div>
<div class="a" style="left:1295px;top:39px;width:52px;height:21px;background:#f0f0f0;border:1px solid #d9d9d9"></div>
<div class="t" style="top:44.2px;font-size:11.6px;color:#000;left:1301px;">Startup</div>
<div class="a" style="left:1346px;top:39px;width:40px;height:21px;background:#f0f0f0;border:1px solid #d9d9d9"></div>
<div class="t" style="top:44.2px;font-size:11.6px;color:#000;left:1352px;">Users</div>
<div class="a" style="left:1385px;top:39px;width:49px;height:21px;background:#f0f0f0;border:1px solid #d9d9d9"></div>
<div class="t" style="top:44.2px;font-size:11.6px;color:#000;left:1392px;">Details</div>
<div class="a" style="left:1433px;top:39px;width:53px;height:21px;background:#f0f0f0;border:1px solid #d9d9d9"></div>
<div class="t" style="top:44.2px;font-size:11.6px;color:#000;left:1439px;">Services</div>
<div class="a" style="left:1082px;top:72px;width:178px;height:60px;background:#d9d9d9;"></div>
<div class="a" style="left:1263px;top:82px;width:1px;height:652px;background:#d9d9d9;"></div>
<div class="a" style="left:1092px;top:82px;width:60px;height:40px;border:1px solid #117dbb;background:#fff"></div>
<div class="t" style="top:80.7px;font-size:15.2px;color:#000;left:1162.5px;">CPU</div>
<div class="t" style="top:100.0px;font-size:11.2px;color:#000;left:1162.5px;">100%&nbsp; 4.29 GHz</div>
<div class="a" style="left:1092px;top:142px;width:60px;height:40px;border:1px solid #8b12ae;background:#fff"></div>
<div class="t" style="top:140.7px;font-size:15.2px;color:#000;left:1162.5px;">Memory</div>
<div class="t" style="top:160.0px;font-size:11.2px;color:#000;left:1162.5px;">13.8/63.8 GB (22%)</div>
<div class="a" style="left:1092px;top:202px;width:60px;height:45px;border:1px solid #4da60c;background:#fff"></div>
<div class="t" style="top:200.7px;font-size:15.2px;color:#000;left:1162.5px;">Disk 0 (D:)</div>
<div class="t" style="top:220.0px;font-size:11.2px;color:#000;left:1162.5px;">SSD</div>
<div class="t" style="top:235.0px;font-size:11.2px;color:#000;left:1162.5px;">0%</div>
<div class="a" style="left:1092px;top:268px;width:60px;height:45px;border:1px solid #4da60c;background:#fff"></div>
<div class="t" style="top:266.7px;font-size:15.2px;color:#000;left:1162.5px;">Disk 1 (C:)</div>
<div class="t" style="top:286.0px;font-size:11.2px;color:#000;left:1162.5px;">SSD</div>
<div class="t" style="top:301.0px;font-size:11.2px;color:#000;left:1162.5px;">0%</div>
<div class="a" style="left:1092px;top:334px;width:60px;height:45px;border:1px solid #4da60c;background:#fff"></div>
<div class="t" style="top:332.7px;font-size:15.2px;color:#000;left:1162.5px;">Disk 2 (E:)</div>
<div class="t" style="top:352.0px;font-size:11.2px;color:#000;left:1162.5px;">USB</div>
<div class="t" style="top:367.0px;font-size:11.2px;color:#000;left:1162.5px;">0%</div>
<div class="a" style="left:1092px;top:400px;width:60px;height:45px;border:1px solid #a74f01;background:#fff"></div>
<div class="t" style="top:398.7px;font-size:15.2px;color:#000;left:1162.5px;">Ethernet</div>
<div class="t" style="top:418.0px;font-size:11.2px;color:#000;left:1162.5px;">Ethernet 2</div>
<div class="t" style="top:433.0px;font-size:11.2px;color:#000;left:1162.5px;"><span style='color:#777'>S:</span> 0 <span style='color:#777'>R:</span> 0 Kbps</div>
<div class="a" style="left:1092px;top:466px;width:60px;height:45px;border:1px solid #a74f01;background:#fff"></div>
<div class="t" style="top:464.7px;font-size:15.2px;color:#000;left:1162.5px;">Ethernet</div>
<div class="t" style="top:484.0px;font-size:11.2px;color:#000;left:1162.5px;">Ethernet 4</div>
<div class="t" style="top:499.0px;font-size:11.2px;color:#000;left:1162.5px;"><span style='color:#777'>S:</span> 0 <span style='color:#777'>R:</span> 0 Kbps</div>
<div class="a" style="left:1092px;top:532px;width:60px;height:45px;border:1px solid #117dbb;background:#fff"></div>
<div class="t" style="top:530.7px;font-size:15.2px;color:#000;left:1162.5px;">GPU 0</div>
<div class="t" style="top:550.0px;font-size:11.2px;color:#000;left:1162.5px;">Intel(R) UHD ...</div>
<div class="t" style="top:565.0px;font-size:11.2px;color:#000;left:1162.5px;">3%</div>
<div class="a" style="left:1092px;top:598px;width:60px;height:45px;border:1px solid #117dbb;background:#fff"></div>
<div class="t" style="top:596.7px;font-size:15.2px;color:#000;left:1162.5px;">GPU 1</div>
<div class="t" style="top:616.0px;font-size:11.2px;color:#000;left:1162.5px;">NVIDIA GeFor...</div>
<div class="t" style="top:631.0px;font-size:11.2px;color:#000;left:1162.5px;">11%&nbsp; (30 °C)</div>
<div class="t" style="top:85.3px;font-size:24px;color:#000;left:1288px;letter-spacing:0.6px;">CPU</div>
<div class="t" style="top:93.5px;font-size:14.2px;color:#000;right:17px;letter-spacing:0.42px;">Intel(R) Core(TM) i7-8700K CPU @ 3.70GHz</div>
<div class="t" style="top:120.1px;font-size:11.4px;color:#6d6d6d;left:1292px;">% Utilization over 60 seconds</div>
<div class="t" style="top:120.1px;font-size:11.4px;color:#6d6d6d;right:19px;">100%</div>
<svg class="a" style="left:1292px;top:134px" width="90" height="130" viewBox="0 0 90 130"><polygon points="1,129 1.0,121.6 2.0,116.1 3.0,116.7 4.0,120.6 5.0,118.8 6.0,119.1 7.0,117.6 8.0,116.5 9.0,121.9 10.0,122.4 11.0,116.2 12.0,119.3 13.0,116.7 14.0,122.6 15.0,119.2 16.0,117.1 17.0,116.7 18.0,106.8 19.0,104.8 20.0,114.7 21.0,122.4 22.0,118.4 23.0,115.4 24.0,119.7 25.0,120.9 26.0,119.4 27.0,122.4 28.0,120.9 29.0,119.2 30.0,118.8 31.0,120.8 32.0,120.8 33.0,120.9 34.0,119.1 35.0,120.4 36.0,122.4 37.0,116.2 38.0,86.3 39.0,46.8 40.0,7.3 41.0,1.0 42.0,1.0 43.0,8.9 44.0,48.4 45.0,87.9 46.0,117.1 47.0,115.4 48.0,119.4 49.0,116.2 50.0,117.5 51.0,120.3 52.0,118.1 53.0,115.8 54.0,116.1 55.0,118.7 56.0,118.1 57.0,122.3 58.0,120.7 59.0,116.5 60.0,119.4 61.0,114.3 62.0,108.5 63.0,108.5 64.0,112.7 65.0,119.7 66.0,119.2 67.0,116.8 68.0,111.9 69.0,118.4 70.0,119.6 71.0,118.8 72.0,122.4 73.0,122.3 74.0,117.2 75.0,115.0 76.0,118.0 77.0,119.6 78.0,121.3 79.0,118.7 80.0,115.1 81.0,116.7 82.0,118.5 83.0,116.0 84.0,90.5 85.0,62.9 86.0,35.3 87.0,7.6 88.0,1.0 89.0,1.0 89,129" fill="#e4eef6" stroke="none"/><polygon points="1,129 1.0,123.1 2.0,118.7 3.0,119.2 4.0,122.3 5.0,120.8 6.0,121.1 7.0,119.9 8.0,119.0 9.0,123.3 10.0,123.7 11.0,118.7 12.0,121.2 13.0,119.2 14.0,123.9 15.0,121.1 16.0,119.4 17.0,119.1 18.0,111.2 19.0,109.6 20.0,117.5 21.0,123.7 22.0,120.6 23.0,118.1 24.0,121.5 25.0,122.5 26.0,121.3 27.0,123.7 28.0,122.5 29.0,121.2 30.0,120.8 31.0,122.4 32.0,122.5 33.0,122.5 34.0,121.1 35.0,122.1 36.0,123.7 37.0,118.7 38.0,109.8 39.0,92.0 40.0,74.2 41.0,71.4 42.0,71.4 43.0,75.0 44.0,92.7 45.0,110.5 46.0,119.5 47.0,118.1 48.0,121.3 49.0,118.8 50.0,119.8 51.0,122.0 52.0,120.3 53.0,118.5 54.0,118.7 55.0,120.8 56.0,120.3 57.0,123.7 58.0,122.4 59.0,119.0 60.0,121.3 61.0,117.2 62.0,112.6 63.0,112.6 64.0,115.9 65.0,121.6 66.0,121.2 67.0,119.3 68.0,115.3 69.0,120.5 70.0,121.5 71.0,120.9 72.0,123.7 73.0,123.6 74.0,119.6 75.0,117.8 76.0,120.2 77.0,121.5 78.0,122.8 79.0,120.8 80.0,117.8 81.0,119.1 82.0,120.6 83.0,118.6 84.0,111.7 85.0,99.3 86.0,86.8 87.0,74.4 88.0,71.4 89.0,71.4 89,129" fill="#dbe8f2" stroke="none"/><g stroke="#c6ddee" stroke-width="1" opacity="0.85"><line x1="15.5" y1="1" x2="15.5" y2="129"/><line x1="30.5" y1="1" x2="30.5" y2="129"/><line x1="45.5" y1="1" x2="45.5" y2="129"/><line x1="60.5" y1="1" x2="60.5" y2="129"/><line x1="75.5" y1="1" x2="75.5" y2="129"/><line x1="1" y1="13.5" x2="89" y2="13.5"/><line x1="1" y1="26.5" x2="89" y2="26.5"/><line x1="1" y1="39.5" x2="89" y2="39.5"/><line x1="1" y1="52.5" x2="89" y2="52.5"/><line x1="1" y1="65.5" x2="89" y2="65.5"/><line x1="1" y1="78.5" x2="89" y2="78.5"/><line x1="1" y1="91.5" x2="89" y2="91.5"/><line x1="1" y1="104.5" x2="89" y2="104.5"/><line x1="1" y1="117.5" x2="89" y2="117.5"/></g><polyline points="1.0,123.1 2.0,118.7 3.0,119.2 4.0,122.3 5.0,120.8 6.0,121.1 7.0,119.9 8.0,119.0 9.0,123.3 10.0,123.7 11.0,118.7 12.0,121.2 13.0,119.2 14.0,123.9 15.0,121.1 16.0,119.4 17.0,119.1 18.0,111.2 19.0,109.6 20.0,117.5 21.0,123.7 22.0,120.6 23.0,118.1 24.0,121.5 25.0,122.5 26.0,121.3 27.0,123.7 28.0,122.5 29.0,121.2 30.0,120.8 31.0,122.4 32.0,122.5 33.0,122.5 34.0,121.1 35.0,122.1 36.0,123.7 37.0,118.7 38.0,109.8 39.0,92.0 40.0,74.2 41.0,71.4 42.0,71.4 43.0,75.0 44.0,92.7 45.0,110.5 46.0,119.5 47.0,118.1 48.0,121.3 49.0,118.8 50.0,119.8 51.0,122.0 52.0,120.3 53.0,118.5 54.0,118.7 55.0,120.8 56.0,120.3 57.0,123.7 58.0,122.4 59.0,119.0 60.0,121.3 61.0,117.2 62.0,112.6 63.0,112.6 64.0,115.9 65.0,121.6 66.0,121.2 67.0,119.3 68.0,115.3 69.0,120.5 70.0,121.5 71.0,120.9 72.0,123.7 73.0,123.6 74.0,119.6 75.0,117.8 76.0,120.2 77.0,121.5 78.0,122.8 79.0,120.8 80.0,117.8 81.0,119.1 82.0,120.6 83.0,118.6 84.0,111.7 85.0,99.3 86.0,86.8 87.0,74.4 88.0,71.4 89.0,71.4" fill="none" stroke="#6fa8d2" stroke-width="0.8" stroke-dasharray="2,1.5"/><polyline points="1.0,121.6 2.0,116.1 3.0,116.7 4.0,120.6 5.0,118.8 6.0,119.1 7.0,117.6 8.0,116.5 9.0,121.9 10.0,122.4 11.0,116.2 12.0,119.3 13.0,116.7 14.0,122.6 15.0,119.2 16.0,117.1 17.0,116.7 18.0,106.8 19.0,104.8 20.0,114.7 21.0,122.4 22.0,118.4 23.0,115.4 24.0,119.7 25.0,120.9 26.0,119.4 27.0,122.4 28.0,120.9 29.0,119.2 30.0,118.8 31.0,120.8 32.0,120.8 33.0,120.9 34.0,119.1 35.0,120.4 36.0,122.4 37.0,116.2 38.0,86.3 39.0,46.8 40.0,7.3 41.0,1.0 42.0,1.0 43.0,8.9 44.0,48.4 45.0,87.9 46.0,117.1 47.0,115.4 48.0,119.4 49.0,116.2 50.0,117.5 51.0,120.3 52.0,118.1 53.0,115.8 54.0,116.1 55.0,118.7 56.0,118.1 57.0,122.3 58.0,120.7 59.0,116.5 60.0,119.4 61.0,114.3 62.0,108.5 63.0,108.5 64.0,112.7 65.0,119.7 66.0,119.2 67.0,116.8 68.0,111.9 69.0,118.4 70.0,119.6 71.0,118.8 72.0,122.4 73.0,122.3 74.0,117.2 75.0,115.0 76.0,118.0 77.0,119.6 78.0,121.3 79.0,118.7 80.0,115.1 81.0,116.7 82.0,118.5 83.0,116.0 84.0,90.5 85.0,62.9 86.0,35.3 87.0,7.6 88.0,1.0 89.0,1.0" fill="none" stroke="#117dbb" stroke-width="1"/><rect x="0.5" y="0.5" width="89" height="129" fill="none" stroke="#117dbb" stroke-width="1"/></svg>
<svg class="a" style="left:1386px;top:134px" width="90" height="130" viewBox="0 0 90 130"><polygon points="1,129 1.0,122.8 2.0,122.8 3.0,126.2 4.0,126.1 5.0,123.2 6.0,123.6 7.0,123.9 8.0,125.3 9.0,124.1 10.0,124.1 11.0,124.2 12.0,125.8 13.0,124.8 14.0,124.9 15.0,123.7 16.0,122.6 17.0,122.8 18.0,124.4 19.0,124.7 20.0,125.4 21.0,126.3 22.0,126.3 23.0,124.7 24.0,125.2 25.0,125.0 26.0,123.0 27.0,124.4 28.0,124.3 29.0,125.5 30.0,126.3 31.0,125.2 32.0,125.9 33.0,124.5 34.0,122.6 35.0,123.8 36.0,125.7 37.0,123.0 38.0,123.4 39.0,84.1 40.0,43.4 41.0,2.6 42.0,1.0 43.0,1.0 44.0,14.0 45.0,54.8 46.0,95.5 47.0,123.5 48.0,123.7 49.0,124.7 50.0,124.4 51.0,124.6 52.0,122.9 53.0,124.5 54.0,123.2 55.0,125.1 56.0,123.0 57.0,123.0 58.0,124.7 59.0,124.3 60.0,122.9 61.0,123.7 62.0,124.6 63.0,125.6 64.0,125.2 65.0,123.8 66.0,125.8 67.0,123.0 68.0,125.4 69.0,122.9 70.0,125.3 71.0,122.8 72.0,123.7 73.0,124.5 74.0,124.5 75.0,123.9 76.0,124.2 77.0,125.2 78.0,125.6 79.0,124.5 80.0,122.9 81.0,124.0 82.0,126.2 83.0,123.3 84.0,123.7 85.0,123.0 86.0,120.7 87.0,49.5 88.0,1.0 89.0,1.0 89,129" fill="#e4eef6" stroke="none"/><polygon points="1,129 1.0,124.0 2.0,124.0 3.0,126.8 4.0,126.7 5.0,124.4 6.0,124.7 7.0,124.9 8.0,126.0 9.0,125.1 10.0,125.1 11.0,125.2 12.0,126.5 13.0,125.6 14.0,125.7 15.0,124.7 16.0,123.9 17.0,124.0 18.0,125.3 19.0,125.6 20.0,126.1 21.0,126.8 22.0,126.9 23.0,125.5 24.0,126.0 25.0,125.8 26.0,124.2 27.0,125.3 28.0,125.2 29.0,126.2 30.0,126.9 31.0,126.0 32.0,126.5 33.0,125.4 34.0,123.9 35.0,124.9 36.0,126.4 37.0,124.2 38.0,124.5 39.0,108.8 40.0,90.5 41.0,72.1 42.0,71.4 43.0,71.4 44.0,77.3 45.0,95.6 46.0,102.2 47.0,124.6 48.0,124.8 49.0,125.5 50.0,125.3 51.0,125.4 52.0,124.1 53.0,125.4 54.0,124.4 55.0,125.9 56.0,124.2 57.0,124.2 58.0,125.5 59.0,125.2 60.0,124.1 61.0,124.7 62.0,125.5 63.0,126.3 64.0,126.0 65.0,124.8 66.0,126.4 67.0,124.2 68.0,126.1 69.0,124.2 70.0,126.0 71.0,124.0 72.0,124.8 73.0,125.4 74.0,125.4 75.0,125.0 76.0,125.1 77.0,126.0 78.0,126.3 79.0,125.4 80.0,124.1 81.0,125.0 82.0,126.7 83.0,124.4 84.0,124.7 85.0,124.2 86.0,122.4 87.0,93.2 88.0,71.4 89.0,71.4 89,129" fill="#dbe8f2" stroke="none"/><g stroke="#c6ddee" stroke-width="1" opacity="0.85"><line x1="15.5" y1="1" x2="15.5" y2="129"/><line x1="30.5" y1="1" x2="30.5" y2="129"/><line x1="45.5" y1="1" x2="45.5" y2="129"/><line x1="60.5" y1="1" x2="60.5" y2="129"/><line x1="75.5" y1="1" x2="75.5" y2="129"/><line x1="1" y1="13.5" x2="89" y2="13.5"/><line x1="1" y1="26.5" x2="89" y2="26.5"/><line x1="1" y1="39.5" x2="89" y2="39.5"/><line x1="1" y1="52.5" x2="89" y2="52.5"/><line x1="1" y1="65.5" x2="89" y2="65.5"/><line x1="1" y1="78.5" x2="89" y2="78.5"/><line x1="1" y1="91.5" x2="89" y2="91.5"/><line x1="1" y1="104.5" x2="89" y2="104.5"/><line x1="1" y1="117.5" x2="89" y2="117.5"/></g><polyline points="1.0,124.0 2.0,124.0 3.0,126.8 4.0,126.7 5.0,124.4 6.0,124.7 7.0,124.9 8.0,126.0 9.0,125.1 10.0,125.1 11.0,125.2 12.0,126.5 13.0,125.6 14.0,125.7 15.0,124.7 16.0,123.9 17.0,124.0 18.0,125.3 19.0,125.6 20.0,126.1 21.0,126.8 22.0,126.9 23.0,125.5 24.0,126.0 25.0,125.8 26.0,124.2 27.0,125.3 28.0,125.2 29.0,126.2 30.0,126.9 31.0,126.0 32.0,126.5 33.0,125.4 34.0,123.9 35.0,124.9 36.0,126.4 37.0,124.2 38.0,124.5 39.0,108.8 40.0,90.5 41.0,72.1 42.0,71.4 43.0,71.4 44.0,77.3 45.0,95.6 46.0,102.2 47.0,124.6 48.0,124.8 49.0,125.5 50.0,125.3 51.0,125.4 52.0,124.1 53.0,125.4 54.0,124.4 55.0,125.9 56.0,124.2 57.0,124.2 58.0,125.5 59.0,125.2 60.0,124.1 61.0,124.7 62.0,125.5 63.0,126.3 64.0,126.0 65.0,124.8 66.0,126.4 67.0,124.2 68.0,126.1 69.0,124.2 70.0,126.0 71.0,124.0 72.0,124.8 73.0,125.4 74.0,125.4 75.0,125.0 76.0,125.1 77.0,126.0 78.0,126.3 79.0,125.4 80.0,124.1 81.0,125.0 82.0,126.7 83.0,124.4 84.0,124.7 85.0,124.2 86.0,122.4 87.0,93.2 88.0,71.4 89.0,71.4" fill="none" stroke="#6fa8d2" stroke-width="0.8" stroke-dasharray="2,1.5"/><polyline points="1.0,122.8 2.0,122.8 3.0,126.2 4.0,126.1 5.0,123.2 6.0,123.6 7.0,123.9 8.0,125.3 9.0,124.1 10.0,124.1 11.0,124.2 12.0,125.8 13.0,124.8 14.0,124.9 15.0,123.7 16.0,122.6 17.0,122.8 18.0,124.4 19.0,124.7 20.0,125.4 21.0,126.3 22.0,126.3 23.0,124.7 24.0,125.2 25.0,125.0 26.0,123.0 27.0,124.4 28.0,124.3 29.0,125.5 30.0,126.3 31.0,125.2 32.0,125.9 33.0,124.5 34.0,122.6 35.0,123.8 36.0,125.7 37.0,123.0 38.0,123.4 39.0,84.1 40.0,43.4 41.0,2.6 42.0,1.0 43.0,1.0 44.0,14.0 45.0,54.8 46.0,95.5 47.0,123.5 48.0,123.7 49.0,124.7 50.0,124.4 51.0,124.6 52.0,122.9 53.0,124.5 54.0,123.2 55.0,125.1 56.0,123.0 57.0,123.0 58.0,124.7 59.0,124.3 60.0,122.9 61.0,123.7 62.0,124.6 63.0,125.6 64.0,125.2 65.0,123.8 66.0,125.8 67.0,123.0 68.0,125.4 69.0,122.9 70.0,125.3 71.0,122.8 72.0,123.7 73.0,124.5 74.0,124.5 75.0,123.9 76.0,124.2 77.0,125.2 78.0,125.6 79.0,124.5 80.0,122.9 81.0,124.0 82.0,126.2 83.0,123.3 84.0,123.7 85.0,123.0 86.0,120.7 87.0,49.5 88.0,1.0 89.0,1.0" fill="none" stroke="#117dbb" stroke-width="1"/><rect x="0.5" y="0.5" width="89" height="129" fill="none" stroke="#117dbb" stroke-width="1"/></svg>
<svg class="a" style="left:1480px;top:134px" width="90" height="130" viewBox="0 0 90 130"><polygon points="1,129 1.0,117.3 2.0,113.8 3.0,115.8 4.0,113.1 5.0,112.8 6.0,119.3 7.0,119.9 8.0,110.4 9.0,117.1 10.0,117.3 11.0,108.6 12.0,114.6 13.0,110.4 14.0,114.6 15.0,100.8 16.0,78.8 17.0,102.8 18.0,110.0 19.0,102.0 20.0,80.4 21.0,86.5 22.0,108.0 23.0,111.3 24.0,113.2 25.0,116.6 26.0,119.7 27.0,110.1 28.0,114.6 29.0,111.8 30.0,109.9 31.0,111.8 32.0,84.7 33.0,72.9 34.0,105.6 35.0,114.9 36.0,109.3 37.0,97.9 38.0,72.5 39.0,100.1 40.0,85.2 41.0,55.1 42.0,25.0 43.0,1.0 44.0,1.0 45.0,1.0 46.0,17.8 47.0,47.9 48.0,78.0 49.0,108.0 50.0,109.6 51.0,112.2 52.0,109.3 53.0,110.2 54.0,108.6 55.0,112.3 56.0,118.2 57.0,110.1 58.0,108.9 59.0,109.6 60.0,113.5 61.0,111.8 62.0,117.6 63.0,110.5 64.0,94.0 65.0,66.9 66.0,39.7 67.0,31.7 68.0,39.7 69.0,66.9 70.0,94.0 71.0,115.3 72.0,104.8 73.0,79.3 74.0,96.6 75.0,110.0 76.0,98.0 77.0,90.7 78.0,111.1 79.0,111.8 80.0,116.2 81.0,109.9 82.0,104.7 83.0,93.3 84.0,108.5 85.0,81.6 86.0,51.5 87.0,21.4 88.0,1.0 89.0,1.0 89,129" fill="#e4eef6" stroke="none"/><polygon points="1,129 1.0,119.6 2.0,116.8 3.0,118.4 4.0,116.3 5.0,116.1 6.0,121.2 7.0,121.7 8.0,114.1 9.0,119.4 10.0,119.7 11.0,112.7 12.0,117.5 13.0,114.1 14.0,117.4 15.0,106.5 16.0,106.4 17.0,108.0 18.0,113.8 19.0,107.4 20.0,107.1 21.0,109.9 22.0,112.2 23.0,114.8 24.0,116.4 25.0,119.1 26.0,121.5 27.0,113.9 28.0,117.5 29.0,115.2 30.0,113.7 31.0,115.3 32.0,109.1 33.0,103.8 34.0,110.3 35.0,117.7 36.0,113.2 37.0,104.1 38.0,103.6 39.0,105.9 40.0,109.3 41.0,95.7 42.0,82.2 43.0,71.4 44.0,71.4 45.0,71.4 46.0,79.0 47.0,92.5 48.0,106.0 49.0,112.2 50.0,113.5 51.0,115.5 52.0,113.3 53.0,113.9 54.0,112.7 55.0,115.6 56.0,120.3 57.0,113.9 58.0,112.9 59.0,113.5 60.0,116.6 61.0,115.3 62.0,119.9 63.0,114.2 64.0,101.0 65.0,101.0 66.0,88.8 67.0,85.2 68.0,88.8 69.0,101.0 70.0,101.0 71.0,118.0 72.0,109.6 73.0,106.6 74.0,103.1 75.0,113.8 76.0,104.2 77.0,98.4 78.0,114.7 79.0,115.2 80.0,118.8 81.0,113.7 82.0,109.5 83.0,100.4 84.0,112.6 85.0,107.7 86.0,94.1 87.0,80.6 88.0,71.4 89.0,71.4 89,129" fill="#dbe8f2" stroke="none"/><g stroke="#c6ddee" stroke-width="1" opacity="0.85"><line x1="15.5" y1="1" x2="15.5" y2="129"/><line x1="30.5" y1="1" x2="30.5" y2="129"/><line x1="45.5" y1="1" x2="45.5" y2="129"/><line x1="60.5" y1="1" x2="60.5" y2="129"/><line x1="75.5" y1="1" x2="75.5" y2="129"/><line x1="1" y1="13.5" x2="89" y2="13.5"/><line x1="1" y1="26.5" x2="89" y2="26.5"/><line x1="1" y1="39.5" x2="89" y2="39.5"/><line x1="1" y1="52.5" x2="89" y2="52.5"/><line x1="1" y1="65.5" x2="89" y2="65.5"/><line x1="1" y1="78.5" x2="89" y2="78.5"/><line x1="1" y1="91.5" x2="89" y2="91.5"/><line x1="1" y1="104.5" x2="89" y2="104.5"/><line x1="1" y1="117.5" x2="89" y2="117.5"/></g><polyline points="1.0,119.6 2.0,116.8 3.0,118.4 4.0,116.3 5.0,116.1 6.0,121.2 7.0,121.7 8.0,114.1 9.0,119.4 10.0,119.7 11.0,112.7 12.0,117.5 13.0,114.1 14.0,117.4 15.0,106.5 16.0,106.4 17.0,108.0 18.0,113.8 19.0,107.4 20.0,107.1 21.0,109.9 22.0,112.2 23.0,114.8 24.0,116.4 25.0,119.1 26.0,121.5 27.0,113.9 28.0,117.5 29.0,115.2 30.0,113.7 31.0,115.3 32.0,109.1 33.0,103.8 34.0,110.3 35.0,117.7 36.0,113.2 37.0,104.1 38.0,103.6 39.0,105.9 40.0,109.3 41.0,95.7 42.0,82.2 43.0,71.4 44.0,71.4 45.0,71.4 46.0,79.0 47.0,92.5 48.0,106.0 49.0,112.2 50.0,113.5 51.0,115.5 52.0,113.3 53.0,113.9 54.0,112.7 55.0,115.6 56.0,120.3 57.0,113.9 58.0,112.9 59.0,113.5 60.0,116.6 61.0,115.3 62.0,119.9 63.0,114.2 64.0,101.0 65.0,101.0 66.0,88.8 67.0,85.2 68.0,88.8 69.0,101.0 70.0,101.0 71.0,118.0 72.0,109.6 73.0,106.6 74.0,103.1 75.0,113.8 76.0,104.2 77.0,98.4 78.0,114.7 79.0,115.2 80.0,118.8 81.0,113.7 82.0,109.5 83.0,100.4 84.0,112.6 85.0,107.7 86.0,94.1 87.0,80.6 88.0,71.4 89.0,71.4" fill="none" stroke="#6fa8d2" stroke-width="0.8" stroke-dasharray="2,1.5"/><polyline points="1.0,117.3 2.0,113.8 3.0,115.8 4.0,113.1 5.0,112.8 6.0,119.3 7.0,119.9 8.0,110.4 9.0,117.1 10.0,117.3 11.0,108.6 12.0,114.6 13.0,110.4 14.0,114.6 15.0,100.8 16.0,78.8 17.0,102.8 18.0,110.0 19.0,102.0 20.0,80.4 21.0,86.5 22.0,108.0 23.0,111.3 24.0,113.2 25.0,116.6 26.0,119.7 27.0,110.1 28.0,114.6 29.0,111.8 30.0,109.9 31.0,111.8 32.0,84.7 33.0,72.9 34.0,105.6 35.0,114.9 36.0,109.3 37.0,97.9 38.0,72.5 39.0,100.1 40.0,85.2 41.0,55.1 42.0,25.0 43.0,1.0 44.0,1.0 45.0,1.0 46.0,17.8 47.0,47.9 48.0,78.0 49.0,108.0 50.0,109.6 51.0,112.2 52.0,109.3 53.0,110.2 54.0,108.6 55.0,112.3 56.0,118.2 57.0,110.1 58.0,108.9 59.0,109.6 60.0,113.5 61.0,111.8 62.0,117.6 63.0,110.5 64.0,94.0 65.0,66.9 66.0,39.7 67.0,31.7 68.0,39.7 69.0,66.9 70.0,94.0 71.0,115.3 72.0,104.8 73.0,79.3 74.0,96.6 75.0,110.0 76.0,98.0 77.0,90.7 78.0,111.1 79.0,111.8 80.0,116.2 81.0,109.9 82.0,104.7 83.0,93.3 84.0,108.5 85.0,81.6 86.0,51.5 87.0,21.4 88.0,1.0 89.0,1.0" fill="none" stroke="#117dbb" stroke-width="1"/><rect x="0.5" y="0.5" width="89" height="129" fill="none" stroke="#117dbb" stroke-width="1"/></svg>
<svg class="a" style="left:1574px;top:134px" width="90" height="130" viewBox="0 0 90 130"><polygon points="1,129 1.0,122.1 2.0,123.1 3.0,120.8 4.0,122.7 5.0,123.4 6.0,120.8 7.0,116.8 8.0,117.7 9.0,118.0 10.0,122.2 11.0,119.8 12.0,121.8 13.0,122.6 14.0,123.1 15.0,122.2 16.0,116.8 17.0,117.5 18.0,117.7 19.0,117.7 20.0,122.4 21.0,121.5 22.0,119.1 23.0,118.3 24.0,117.3 25.0,117.1 26.0,123.2 27.0,119.2 28.0,118.7 29.0,120.0 30.0,122.5 31.0,120.2 32.0,123.2 33.0,116.7 34.0,117.2 35.0,119.7 36.0,121.6 37.0,116.9 38.0,119.5 39.0,117.1 40.0,77.6 41.0,37.7 42.0,1.0 43.0,1.0 44.0,1.0 45.0,18.6 46.0,58.5 47.0,98.3 48.0,123.5 49.0,123.5 50.0,119.1 51.0,121.7 52.0,119.8 53.0,120.3 54.0,121.2 55.0,116.2 56.0,122.4 57.0,120.7 58.0,122.3 59.0,119.0 60.0,121.8 61.0,121.1 62.0,118.1 63.0,118.6 64.0,105.6 65.0,109.2 66.0,122.3 67.0,123.4 68.0,122.1 69.0,118.0 70.0,119.2 71.0,122.1 72.0,121.3 73.0,122.5 74.0,120.4 75.0,123.6 76.0,118.5 77.0,117.0 78.0,116.5 79.0,118.2 80.0,116.5 81.0,123.7 82.0,121.7 83.0,116.5 84.0,117.9 85.0,120.7 86.0,94.8 87.0,39.0 88.0,1.0 89.0,1.0 89,129" fill="#e4eef6" stroke="none"/><polygon points="1,129 1.0,123.5 2.0,124.3 3.0,122.5 4.0,124.0 5.0,124.5 6.0,122.4 7.0,119.3 8.0,120.0 9.0,120.2 10.0,123.5 11.0,121.6 12.0,123.2 13.0,123.8 14.0,124.3 15.0,123.6 16.0,119.2 17.0,119.8 18.0,119.9 19.0,120.0 20.0,123.7 21.0,123.0 22.0,121.1 23.0,120.4 24.0,119.7 25.0,119.5 26.0,124.4 27.0,121.2 28.0,120.8 29.0,121.8 30.0,123.8 31.0,122.0 32.0,124.4 33.0,119.2 34.0,119.6 35.0,121.5 36.0,123.1 37.0,119.3 38.0,121.4 39.0,119.5 40.0,105.9 41.0,87.9 42.0,71.4 43.0,71.4 44.0,71.4 45.0,79.3 46.0,97.3 47.0,104.5 48.0,124.6 49.0,124.6 50.0,121.1 51.0,123.2 52.0,121.6 53.0,122.0 54.0,122.8 55.0,118.8 56.0,123.7 57.0,122.4 58.0,123.7 59.0,121.0 60.0,123.2 61.0,122.7 62.0,120.3 63.0,120.7 64.0,110.2 65.0,113.2 66.0,123.6 67.0,124.5 68.0,123.5 69.0,120.2 70.0,121.1 71.0,123.4 72.0,122.9 73.0,123.8 74.0,122.1 75.0,124.6 76.0,120.6 77.0,119.4 78.0,119.0 79.0,120.4 80.0,119.0 81.0,124.8 82.0,123.1 83.0,119.0 84.0,120.1 85.0,122.4 86.0,101.7 87.0,88.5 88.0,71.4 89.0,71.4 89,129" fill="#dbe8f2" stroke="none"/><g stroke="#c6ddee" stroke-width="1" opacity="0.85"><line x1="15.5" y1="1" x2="15.5" y2="129"/><line x1="30.5" y1="1" x2="30.5" y2="129"/><line x1="45.5" y1="1" x2="45.5" y2="129"/><line x1="60.5" y1="1" x2="60.5" y2="129"/><line x1="75.5" y1="1" x2="75.5" y2="129"/><line x1="1" y1="13.5" x2="89" y2="13.5"/><line x1="1" y1="26.5" x2="89" y2="26.5"/><line x1="1" y1="39.5" x2="89" y2="39.5"/><line x1="1" y1="52.5" x2="89" y2="52.5"/><line x1="1" y1="65.5" x2="89" y2="65.5"/><line x1="1" y1="78.5" x2="89" y2="78.5"/><line x1="1" y1="91.5" x2="89" y2="91.5"/><line x1="1" y1="104.5" x2="89" y2="104.5"/><line x1="1" y1="117.5" x2="89" y2="117.5"/></g><polyline points="1.0,123.5 2.0,124.3 3.0,122.5 4.0,124.0 5.0,124.5 6.0,122.4 7.0,119.3 8.0,120.0 9.0,120.2 10.0,123.5 11.0,121.6 12.0,123.2 13.0,123.8 14.0,124.3 15.0,123.6 16.0,119.2 17.0,119.8 18.0,119.9 19.0,120.0 20.0,123.7 21.0,123.0 22.0,121.1 23.0,120.4 24.0,119.7 25.0,119.5 26.0,124.4 27.0,121.2 28.0,120.8 29.0,121.8 30.0,123.8 31.0,122.0 32.0,124.4 33.0,119.2 34.0,119.6 35.0,121.5 36.0,123.1 37.0,119.3 38.0,121.4 39.0,119.5 40.0,105.9 41.0,87.9 42.0,71.4 43.0,71.4 44.0,71.4 45.0,79.3 46.0,97.3 47.0,104.5 48.0,124.6 49.0,124.6 50.0,121.1 51.0,123.2 52.0,121.6 53.0,122.0 54.0,122.8 55.0,118.8 56.0,123.7 57.0,122.4 58.0,123.7 59.0,121.0 60.0,123.2 61.0,122.7 62.0,120.3 63.0,120.7 64.0,110.2 65.0,113.2 66.0,123.6 67.0,124.5 68.0,123.5 69.0,120.2 70.0,121.1 71.0,123.4 72.0,122.9 73.0,123.8 74.0,122.1 75.0,124.6 76.0,120.6 77.0,119.4 78.0,119.0 79.0,120.4 80.0,119.0 81.0,124.8 82.0,123.1 83.0,119.0 84.0,120.1 85.0,122.4 86.0,101.7 87.0,88.5 88.0,71.4 89.0,71.4" fill="none" stroke="#6fa8d2" stroke-width="0.8" stroke-dasharray="2,1.5"/><polyline points="1.0,122.1 2.0,123.1 3.0,120.8 4.0,122.7 5.0,123.4 6.0,120.8 7.0,116.8 8.0,117.7 9.0,118.0 10.0,122.2 11.0,119.8 12.0,121.8 13.0,122.6 14.0,123.1 15.0,122.2 16.0,116.8 17.0,117.5 18.0,117.7 19.0,117.7 20.0,122.4 21.0,121.5 22.0,119.1 23.0,118.3 24.0,117.3 25.0,117.1 26.0,123.2 27.0,119.2 28.0,118.7 29.0,120.0 30.0,122.5 31.0,120.2 32.0,123.2 33.0,116.7 34.0,117.2 35.0,119.7 36.0,121.6 37.0,116.9 38.0,119.5 39.0,117.1 40.0,77.6 41.0,37.7 42.0,1.0 43.0,1.0 44.0,1.0 45.0,18.6 46.0,58.5 47.0,98.3 48.0,123.5 49.0,123.5 50.0,119.1 51.0,121.7 52.0,119.8 53.0,120.3 54.0,121.2 55.0,116.2 56.0,122.4 57.0,120.7 58.0,122.3 59.0,119.0 60.0,121.8 61.0,121.1 62.0,118.1 63.0,118.6 64.0,105.6 65.0,109.2 66.0,122.3 67.0,123.4 68.0,122.1 69.0,118.0 70.0,119.2 71.0,122.1 72.0,121.3 73.0,122.5 74.0,120.4 75.0,123.6 76.0,118.5 77.0,117.0 78.0,116.5 79.0,118.2 80.0,116.5 81.0,123.7 82.0,121.7 83.0,116.5 84.0,117.9 85.0,120.7 86.0,94.8 87.0,39.0 88.0,1.0 89.0,1.0" fill="none" stroke="#117dbb" stroke-width="1"/><rect x="0.5" y="0.5" width="89" height="129" fill="none" stroke="#117dbb" stroke-width="1"/></svg>
<svg class="a" style="left:1292px;top:268px" width="90" height="130" viewBox="0 0 90 130"><polygon points="1,129 1.0,119.1 2.0,118.2 3.0,117.8 4.0,116.6 5.0,118.2 6.0,116.8 7.0,123.7 8.0,120.3 9.0,116.6 10.0,118.9 11.0,117.0 12.0,123.0 13.0,120.3 14.0,122.0 15.0,119.7 16.0,119.5 17.0,123.8 18.0,122.2 19.0,121.7 20.0,116.8 21.0,118.0 22.0,122.7 23.0,117.8 24.0,122.8 25.0,119.1 26.0,121.0 27.0,113.0 28.0,114.6 29.0,122.3 30.0,122.2 31.0,116.3 32.0,117.2 33.0,121.7 34.0,116.5 35.0,114.1 36.0,96.7 37.0,107.1 38.0,116.7 39.0,82.4 40.0,42.5 41.0,2.6 42.0,1.0 43.0,1.0 44.0,13.8 45.0,53.7 46.0,93.6 47.0,121.6 48.0,119.2 49.0,123.9 50.0,118.7 51.0,121.3 52.0,121.5 53.0,117.6 54.0,120.2 55.0,121.5 56.0,120.2 57.0,118.5 58.0,123.4 59.0,116.4 60.0,123.7 61.0,118.1 62.0,104.8 63.0,88.3 64.0,71.8 65.0,58.6 66.0,63.9 67.0,80.4 68.0,96.8 69.0,113.3 70.0,116.5 71.0,122.4 72.0,118.1 73.0,116.7 74.0,116.6 75.0,121.2 76.0,121.2 77.0,119.9 78.0,117.9 79.0,123.1 80.0,118.1 81.0,117.8 82.0,117.3 83.0,119.8 84.0,94.4 85.0,69.0 86.0,43.7 87.0,18.3 88.0,1.0 89.0,1.0 89,129" fill="#e4eef6" stroke="none"/><polygon points="1,129 1.0,121.1 2.0,120.3 3.0,120.0 4.0,119.1 5.0,120.4 6.0,119.2 7.0,124.7 8.0,122.0 9.0,119.1 10.0,120.9 11.0,119.4 12.0,124.2 13.0,122.0 14.0,123.4 15.0,121.6 16.0,121.4 17.0,124.8 18.0,123.6 19.0,123.2 20.0,119.3 21.0,120.2 22.0,123.9 23.0,120.0 24.0,124.1 25.0,121.1 26.0,122.6 27.0,116.2 28.0,117.5 29.0,123.6 30.0,123.6 31.0,118.9 32.0,119.5 33.0,123.1 34.0,119.0 35.0,117.1 36.0,103.1 37.0,111.5 38.0,119.1 39.0,108.0 40.0,90.1 41.0,72.1 42.0,71.4 43.0,71.4 44.0,77.1 45.0,95.1 46.0,100.6 47.0,123.1 48.0,121.2 49.0,124.9 50.0,120.7 51.0,122.8 52.0,123.0 53.0,119.9 54.0,122.0 55.0,123.0 56.0,121.9 57.0,120.6 58.0,124.6 59.0,118.9 60.0,124.8 61.0,120.3 62.0,109.6 63.0,110.7 64.0,103.3 65.0,97.3 66.0,99.7 67.0,107.1 68.0,103.3 69.0,116.5 70.0,119.0 71.0,123.7 72.0,120.3 73.0,119.2 74.0,119.1 75.0,122.8 76.0,122.7 77.0,121.7 78.0,120.1 79.0,124.2 80.0,120.3 81.0,120.0 82.0,119.6 83.0,121.7 84.0,101.3 85.0,102.0 86.0,90.6 87.0,79.2 88.0,71.4 89.0,71.4 89,129" fill="#dbe8f2" stroke="none"/><g stroke="#c6ddee" stroke-width="1" opacity="0.85"><line x1="15.5" y1="1" x2="15.5" y2="129"/><line x1="30.5" y1="1" x2="30.5" y2="129"/><line x1="45.5" y1="1" x2="45.5" y2="129"/><line x1="60.5" y1="1" x2="60.5" y2="129"/><line x1="75.5" y1="1" x2="75.5" y2="129"/><line x1="1" y1="13.5" x2="89" y2="13.5"/><line x1="1" y1="26.5" x2="89" y2="26.5"/><line x1="1" y1="39.5" x2="89" y2="39.5"/><line x1="1" y1="52.5" x2="89" y2="52.5"/><line x1="1" y1="65.5" x2="89" y2="65.5"/><line x1="1" y1="78.5" x2="89" y2="78.5"/><line x1="1" y1="91.5" x2="89" y2="91.5"/><line x1="1" y1="104.5" x2="89" y2="104.5"/><line x1="1" y1="117.5" x2="89" y2="117.5"/></g><polyline points="1.0,121.1 2.0,120.3 3.0,120.0 4.0,119.1 5.0,120.4 6.0,119.2 7.0,124.7 8.0,122.0 9.0,119.1 10.0,120.9 11.0,119.4 12.0,124.2 13.0,122.0 14.0,123.4 15.0,121.6 16.0,121.4 17.0,124.8 18.0,123.6 19.0,123.2 20.0,119.3 21.0,120.2 22.0,123.9 23.0,120.0 24.0,124.1 25.0,121.1 26.0,122.6 27.0,116.2 28.0,117.5 29.0,123.6 30.0,123.6 31.0,118.9 32.0,119.5 33.0,123.1 34.0,119.0 35.0,117.1 36.0,103.1 37.0,111.5 38.0,119.1 39.0,108.0 40.0,90.1 41.0,72.1 42.0,71.4 43.0,71.4 44.0,77.1 45.0,95.1 46.0,100.6 47.0,123.1 48.0,121.2 49.0,124.9 50.0,120.7 51.0,122.8 52.0,123.0 53.0,119.9 54.0,122.0 55.0,123.0 56.0,121.9 57.0,120.6 58.0,124.6 59.0,118.9 60.0,124.8 61.0,120.3 62.0,109.6 63.0,110.7 64.0,103.3 65.0,97.3 66.0,99.7 67.0,107.1 68.0,103.3 69.0,116.5 70.0,119.0 71.0,123.7 72.0,120.3 73.0,119.2 74.0,119.1 75.0,122.8 76.0,122.7 77.0,121.7 78.0,120.1 79.0,124.2 80.0,120.3 81.0,120.0 82.0,119.6 83.0,121.7 84.0,101.3 85.0,102.0 86.0,90.6 87.0,79.2 88.0,71.4 89.0,71.4" fill="none" stroke="#6fa8d2" stroke-width="0.8" stroke-dasharray="2,1.5"/><polyline points="1.0,119.1 2.0,118.2 3.0,117.8 4.0,116.6 5.0,118.2 6.0,116.8 7.0,123.7 8.0,120.3 9.0,116.6 10.0,118.9 11.0,117.0 12.0,123.0 13.0,120.3 14.0,122.0 15.0,119.7 16.0,119.5 17.0,123.8 18.0,122.2 19.0,121.7 20.0,116.8 21.0,118.0 22.0,122.7 23.0,117.8 24.0,122.8 25.0,119.1 26.0,121.0 27.0,113.0 28.0,114.6 29.0,122.3 30.0,122.2 31.0,116.3 32.0,117.2 33.0,121.7 34.0,116.5 35.0,114.1 36.0,96.7 37.0,107.1 38.0,116.7 39.0,82.4 40.0,42.5 41.0,2.6 42.0,1.0 43.0,1.0 44.0,13.8 45.0,53.7 46.0,93.6 47.0,121.6 48.0,119.2 49.0,123.9 50.0,118.7 51.0,121.3 52.0,121.5 53.0,117.6 54.0,120.2 55.0,121.5 56.0,120.2 57.0,118.5 58.0,123.4 59.0,116.4 60.0,123.7 61.0,118.1 62.0,104.8 63.0,88.3 64.0,71.8 65.0,58.6 66.0,63.9 67.0,80.4 68.0,96.8 69.0,113.3 70.0,116.5 71.0,122.4 72.0,118.1 73.0,116.7 74.0,116.6 75.0,121.2 76.0,121.2 77.0,119.9 78.0,117.9 79.0,123.1 80.0,118.1 81.0,117.8 82.0,117.3 83.0,119.8 84.0,94.4 85.0,69.0 86.0,43.7 87.0,18.3 88.0,1.0 89.0,1.0" fill="none" stroke="#117dbb" stroke-width="1"/><rect x="0.5" y="0.5" width="89" height="129" fill="none" stroke="#117dbb" stroke-width="1"/></svg>
<svg class="a" style="left:1386px;top:268px" width="90" height="130" viewBox="0 0 90 130"><polygon points="1,129 1.0,123.4 2.0,123.3 3.0,124.6 4.0,125.4 5.0,126.4 6.0,123.9 7.0,124.6 8.0,123.5 9.0,125.0 10.0,123.5 11.0,125.4 12.0,123.4 13.0,123.6 14.0,124.9 15.0,124.4 16.0,123.8 17.0,125.7 18.0,124.3 19.0,123.3 20.0,125.4 21.0,123.4 22.0,123.8 23.0,123.2 24.0,125.2 25.0,126.1 26.0,123.4 27.0,123.3 28.0,124.7 29.0,126.1 30.0,125.7 31.0,124.0 32.0,125.3 33.0,122.8 34.0,124.2 35.0,125.7 36.0,123.9 37.0,125.1 38.0,122.9 39.0,84.1 40.0,43.4 41.0,2.6 42.0,1.0 43.0,1.0 44.0,14.0 45.0,54.8 46.0,95.5 47.0,124.1 48.0,125.3 49.0,124.2 50.0,126.1 51.0,123.1 52.0,124.4 53.0,126.0 54.0,123.9 55.0,125.2 56.0,125.7 57.0,124.6 58.0,125.9 59.0,125.6 60.0,123.1 61.0,123.8 62.0,126.4 63.0,123.5 64.0,126.4 65.0,125.2 66.0,123.0 67.0,123.5 68.0,118.3 69.0,125.0 70.0,124.9 71.0,126.0 72.0,122.6 73.0,126.2 74.0,124.8 75.0,123.6 76.0,124.9 77.0,122.7 78.0,125.5 79.0,122.7 80.0,123.0 81.0,123.9 82.0,123.0 83.0,124.7 84.0,123.2 85.0,123.4 86.0,120.7 87.0,49.5 88.0,1.0 89.0,1.0 89,129" fill="#e4eef6" stroke="none"/><polygon points="1,129 1.0,124.5 2.0,124.4 3.0,125.5 4.0,126.1 5.0,127.0 6.0,124.9 7.0,125.5 8.0,124.6 9.0,125.8 10.0,124.6 11.0,126.1 12.0,124.5 13.0,124.7 14.0,125.7 15.0,125.3 16.0,124.9 17.0,126.4 18.0,125.3 19.0,124.5 20.0,126.1 21.0,124.5 22.0,124.8 23.0,124.4 24.0,125.9 25.0,126.7 26.0,124.5 27.0,124.5 28.0,125.6 29.0,126.7 30.0,126.3 31.0,125.0 32.0,126.1 33.0,124.0 34.0,125.1 35.0,126.3 36.0,124.9 37.0,125.8 38.0,124.1 39.0,108.8 40.0,90.5 41.0,72.1 42.0,71.4 43.0,71.4 44.0,77.3 45.0,95.6 46.0,102.2 47.0,125.1 48.0,126.0 49.0,125.1 50.0,126.7 51.0,124.2 52.0,125.3 53.0,126.6 54.0,124.9 55.0,126.0 56.0,126.3 57.0,125.5 58.0,126.5 59.0,126.3 60.0,124.3 61.0,124.8 62.0,126.9 63.0,124.6 64.0,126.9 65.0,125.9 66.0,124.2 67.0,124.6 68.0,120.4 69.0,125.8 70.0,125.8 71.0,126.6 72.0,123.9 73.0,126.8 74.0,125.7 75.0,124.7 76.0,125.7 77.0,123.9 78.0,126.2 79.0,123.9 80.0,124.2 81.0,124.9 82.0,124.2 83.0,125.6 84.0,124.4 85.0,124.5 86.0,122.4 87.0,93.2 88.0,71.4 89.0,71.4 89,129" fill="#dbe8f2" stroke="none"/><g stroke="#c6ddee" stroke-width="1" opacity="0.85"><line x1="15.5" y1="1" x2="15.5" y2="129"/><line x1="30.5" y1="1" x2="30.5" y2="129"/><line x1="45.5" y1="1" x2="45.5" y2="129"/><line x1="60.5" y1="1" x2="60.5" y2="129"/><line x1="75.5" y1="1" x2="75.5" y2="129"/><line x1="1" y1="13.5" x2="89" y2="13.5"/><line x1="1" y1="26.5" x2="89" y2="26.5"/><line x1="1" y1="39.5" x2="89" y2="39.5"/><line x1="1" y1="52.5" x2="89" y2="52.5"/><line x1="1" y1="65.5" x2="89" y2="65.5"/><line x1="1" y1="78.5" x2="89" y2="78.5"/><line x1="1" y1="91.5" x2="89" y2="91.5"/><line x1="1" y1="104.5" x2="89" y2="104.5"/><line x1="1" y1="117.5" x2="89" y2="117.5"/></g><polyline points="1.0,124.5 2.0,124.4 3.0,125.5 4.0,126.1 5.0,127.0 6.0,124.9 7.0,125.5 8.0,124.6 9.0,125.8 10.0,124.6 11.0,126.1 12.0,124.5 13.0,124.7 14.0,125.7 15.0,125.3 16.0,124.9 17.0,126.4 18.0,125.3 19.0,124.5 20.0,126.1 21.0,124.5 22.0,124.8 23.0,124.4 24.0,125.9 25.0,126.7 26.0,124.5 27.0,124.5 28.0,125.6 29.0,126.7 30.0,126.3 31.0,125.0 32.0,126.1 33.0,124.0 34.0,125.1 35.0,126.3 36.0,124.9 37.0,125.8 38.0,124.1 39.0,108.8 40.0,90.5 41.0,72.1 42.0,71.4 43.0,71.4 44.0,77.3 45.0,95.6 46.0,102.2 47.0,125.1 48.0,126.0 49.0,125.1 50.0,126.7 51.0,124.2 52.0,125.3 53.0,126.6 54.0,124.9 55.0,126.0 56.0,126.3 57.0,125.5 58.0,126.5 59.0,126.3 60.0,124.3 61.0,124.8 62.0,126.9 63.0,124.6 64.0,126.9 65.0,125.9 66.0,124.2 67.0,124.6 68.0,120.4 69.0,125.8 70.0,125.8 71.0,126.6 72.0,123.9 73.0,126.8 74.0,125.7 75.0,124.7 76.0,125.7 77.0,123.9 78.0,126.2 79.0,123.9 80.0,124.2 81.0,124.9 82.0,124.2 83.0,125.6 84.0,124.4 85.0,124.5 86.0,122.4 87.0,93.2 88.0,71.4 89.0,71.4" fill="none" stroke="#6fa8d2" stroke-width="0.8" stroke-dasharray="2,1.5"/><polyline points="1.0,123.4 2.0,123.3 3.0,124.6 4.0,125.4 5.0,126.4 6.0,123.9 7.0,124.6 8.0,123.5 9.0,125.0 10.0,123.5 11.0,125.4 12.0,123.4 13.0,123.6 14.0,124.9 15.0,124.4 16.0,123.8 17.0,125.7 18.0,124.3 19.0,123.3 20.0,125.4 21.0,123.4 22.0,123.8 23.0,123.2 24.0,125.2 25.0,126.1 26.0,123.4 27.0,123.3 28.0,124.7 29.0,126.1 30.0,125.7 31.0,124.0 32.0,125.3 33.0,122.8 34.0,124.2 35.0,125.7 36.0,123.9 37.0,125.1 38.0,122.9 39.0,84.1 40.0,43.4 41.0,2.6 42.0,1.0 43.0,1.0 44.0,14.0 45.0,54.8 46.0,95.5 47.0,124.1 48.0,125.3 49.0,124.2 50.0,126.1 51.0,123.1 52.0,124.4 53.0,126.0 54.0,123.9 55.0,125.2 56.0,125.7 57.0,124.6 58.0,125.9 59.0,125.6 60.0,123.1 61.0,123.8 62.0,126.4 63.0,123.5 64.0,126.4 65.0,125.2 66.0,123.0 67.0,123.5 68.0,118.3 69.0,125.0 70.0,124.9 71.0,126.0 72.0,122.6 73.0,126.2 74.0,124.8 75.0,123.6 76.0,124.9 77.0,122.7 78.0,125.5 79.0,122.7 80.0,123.0 81.0,123.9 82.0,123.0 83.0,124.7 84.0,123.2 85.0,123.4 86.0,120.7 87.0,49.5 88.0,1.0 89.0,1.0" fill="none" stroke="#117dbb" stroke-width="1"/><rect x="0.5" y="0.5" width="89" height="129" fill="none" stroke="#117dbb" stroke-width="1"/></svg>
<svg class="a" style="left:1480px;top:268px" width="90" height="130" viewBox="0 0 90 130"><polygon points="1,129 1.0,121.4 2.0,122.7 3.0,118.9 4.0,123.3 5.0,119.8 6.0,121.1 7.0,123.4 8.0,120.0 9.0,123.6 10.0,120.5 11.0,123.3 12.0,123.2 13.0,120.6 14.0,117.5 15.0,122.9 16.0,122.2 17.0,119.1 18.0,116.6 19.0,119.4 20.0,111.8 21.0,115.3 22.0,123.5 23.0,117.3 24.0,121.7 25.0,122.8 26.0,123.0 27.0,121.5 28.0,117.6 29.0,122.5 30.0,119.4 31.0,119.0 32.0,121.0 33.0,119.7 34.0,123.4 35.0,123.4 36.0,122.3 37.0,118.7 38.0,120.6 39.0,117.5 40.0,77.6 41.0,37.7 42.0,1.0 43.0,1.0 44.0,1.0 45.0,18.6 46.0,58.5 47.0,98.3 48.0,117.2 49.0,118.3 50.0,121.7 51.0,116.4 52.0,123.0 53.0,120.7 54.0,118.1 55.0,122.7 56.0,120.1 57.0,123.6 58.0,118.7 59.0,118.0 60.0,119.5 61.0,117.2 62.0,121.5 63.0,118.5 64.0,119.3 65.0,105.9 66.0,89.3 67.0,72.7 68.0,89.3 69.0,105.9 70.0,118.8 71.0,123.4 72.0,118.5 73.0,118.9 74.0,116.3 75.0,117.6 76.0,121.7 77.0,120.9 78.0,118.7 79.0,123.7 80.0,120.3 81.0,122.6 82.0,123.0 83.0,123.4 84.0,118.0 85.0,122.9 86.0,94.8 87.0,39.0 88.0,1.0 89.0,1.0 89,129" fill="#e4eef6" stroke="none"/><polygon points="1,129 1.0,122.9 2.0,124.0 3.0,120.9 4.0,124.5 5.0,121.6 6.0,122.7 7.0,124.5 8.0,121.8 9.0,124.7 10.0,122.2 11.0,124.5 12.0,124.3 13.0,122.3 14.0,119.8 15.0,124.1 16.0,123.5 17.0,121.0 18.0,119.1 19.0,121.4 20.0,115.2 21.0,118.0 22.0,124.6 23.0,119.6 24.0,123.1 25.0,124.0 26.0,124.2 27.0,123.0 28.0,119.9 29.0,123.8 30.0,121.3 31.0,121.0 32.0,122.6 33.0,121.5 34.0,124.5 35.0,124.5 36.0,123.6 37.0,120.7 38.0,122.3 39.0,119.8 40.0,105.9 41.0,87.9 42.0,71.4 43.0,71.4 44.0,71.4 45.0,79.3 46.0,97.3 47.0,104.5 48.0,119.5 49.0,120.4 50.0,123.1 51.0,118.9 52.0,124.2 53.0,122.3 54.0,120.3 55.0,124.0 56.0,121.9 57.0,124.7 58.0,120.8 59.0,120.2 60.0,121.4 61.0,119.5 62.0,123.0 63.0,120.6 64.0,121.3 65.0,110.5 66.0,111.1 67.0,103.7 68.0,111.1 69.0,110.5 70.0,120.8 71.0,124.5 72.0,120.6 73.0,120.9 74.0,118.8 75.0,119.9 76.0,123.2 77.0,122.5 78.0,120.8 79.0,124.8 80.0,122.1 81.0,123.9 82.0,124.2 83.0,124.5 84.0,120.2 85.0,124.1 86.0,101.7 87.0,88.5 88.0,71.4 89.0,71.4 89,129" fill="#dbe8f2" stroke="none"/><g stroke="#c6ddee" stroke-width="1" opacity="0.85"><line x1="15.5" y1="1" x2="15.5" y2="129"/><line x1="30.5" y1="1" x2="30.5" y2="129"/><line x1="45.5" y1="1" x2="45.5" y2="129"/><line x1="60.5" y1="1" x2="60.5" y2="129"/><line x1="75.5" y1="1" x2="75.5" y2="129"/><line x1="1" y1="13.5" x2="89" y2="13.5"/><line x1="1" y1="26.5" x2="89" y2="26.5"/><line x1="1" y1="39.5" x2="89" y2="39.5"/><line x1="1" y1="52.5" x2="89" y2="52.5"/><line x1="1" y1="65.5" x2="89" y2="65.5"/><line x1="1" y1="78.5" x2="89" y2="78.5"/><line x1="1" y1="91.5" x2="89" y2="91.5"/><line x1="1" y1="104.5" x2="89" y2="104.5"/><line x1="1" y1="117.5" x2="89" y2="117.5"/></g><polyline points="1.0,122.9 2.0,124.0 3.0,120.9 4.0,124.5 5.0,121.6 6.0,122.7 7.0,124.5 8.0,121.8 9.0,124.7 10.0,122.2 11.0,124.5 12.0,124.3 13.0,122.3 14.0,119.8 15.0,124.1 16.0,123.5 17.0,121.0 18.0,119.1 19.0,121.4 20.0,115.2 21.0,118.0 22.0,124.6 23.0,119.6 24.0,123.1 25.0,124.0 26.0,124.2 27.0,123.0 28.0,119.9 29.0,123.8 30.0,121.3 31.0,121.0 32.0,122.6 33.0,121.5 34.0,124.5 35.0,124.5 36.0,123.6 37.0,120.7 38.0,122.3 39.0,119.8 40.0,105.9 41.0,87.9 42.0,71.4 43.0,71.4 44.0,71.4 45.0,79.3 46.0,97.3 47.0,104.5 48.0,119.5 49.0,120.4 50.0,123.1 51.0,118.9 52.0,124.2 53.0,122.3 54.0,120.3 55.0,124.0 56.0,121.9 57.0,124.7 58.0,120.8 59.0,120.2 60.0,121.4 61.0,119.5 62.0,123.0 63.0,120.6 64.0,121.3 65.0,110.5 66.0,111.1 67.0,103.7 68.0,111.1 69.0,110.5 70.0,120.8 71.0,124.5 72.0,120.6 73.0,120.9 74.0,118.8 75.0,119.9 76.0,123.2 77.0,122.5 78.0,120.8 79.0,124.8 80.0,122.1 81.0,123.9 82.0,124.2 83.0,124.5 84.0,120.2 85.0,124.1 86.0,101.7 87.0,88.5 88.0,71.4 89.0,71.4" fill="none" stroke="#6fa8d2" stroke-width="0.8" stroke-dasharray="2,1.5"/><polyline points="1.0,121.4 2.0,122.7 3.0,118.9 4.0,123.3 5.0,119.8 6.0,121.1 7.0,123.4 8.0,120.0 9.0,123.6 10.0,120.5 11.0,123.3 12.0,123.2 13.0,120.6 14.0,117.5 15.0,122.9 16.0,122.2 17.0,119.1 18.0,116.6 19.0,119.4 20.0,111.8 21.0,115.3 22.0,123.5 23.0,117.3 24.0,121.7 25.0,122.8 26.0,123.0 27.0,121.5 28.0,117.6 29.0,122.5 30.0,119.4 31.0,119.0 32.0,121.0 33.0,119.7 34.0,123.4 35.0,123.4 36.0,122.3 37.0,118.7 38.0,120.6 39.0,117.5 40.0,77.6 41.0,37.7 42.0,1.0 43.0,1.0 44.0,1.0 45.0,18.6 46.0,58.5 47.0,98.3 48.0,117.2 49.0,118.3 50.0,121.7 51.0,116.4 52.0,123.0 53.0,120.7 54.0,118.1 55.0,122.7 56.0,120.1 57.0,123.6 58.0,118.7 59.0,118.0 60.0,119.5 61.0,117.2 62.0,121.5 63.0,118.5 64.0,119.3 65.0,105.9 66.0,89.3 67.0,72.7 68.0,89.3 69.0,105.9 70.0,118.8 71.0,123.4 72.0,118.5 73.0,118.9 74.0,116.3 75.0,117.6 76.0,121.7 77.0,120.9 78.0,118.7 79.0,123.7 80.0,120.3 81.0,122.6 82.0,123.0 83.0,123.4 84.0,118.0 85.0,122.9 86.0,94.8 87.0,39.0 88.0,1.0 89.0,1.0" fill="none" stroke="#117dbb" stroke-width="1"/><rect x="0.5" y="0.5" width="89" height="129" fill="none" stroke="#117dbb" stroke-width="1"/></svg>
<svg class="a" style="left:1574px;top:268px" width="90" height="130" viewBox="0 0 90 130"><polygon points="1,129 1.0,127.1 2.0,125.3 3.0,127.4 4.0,125.9 5.0,127.5 6.0,127.1 7.0,125.2 8.0,127.2 9.0,126.1 10.0,126.5 11.0,126.6 12.0,126.5 13.0,127.2 14.0,125.6 15.0,127.5 16.0,127.1 17.0,127.7 18.0,127.0 19.0,126.7 20.0,125.4 21.0,126.7 22.0,127.4 23.0,127.1 24.0,125.2 25.0,127.6 26.0,126.1 27.0,126.8 28.0,126.0 29.0,126.9 30.0,126.0 31.0,126.4 32.0,126.1 33.0,125.4 34.0,126.2 35.0,127.4 36.0,127.6 37.0,125.3 38.0,126.5 39.0,118.5 40.0,60.9 41.0,3.3 42.0,1.0 43.0,1.0 44.0,19.4 45.0,77.0 46.0,125.5 47.0,127.4 48.0,125.8 49.0,127.5 50.0,126.0 51.0,125.9 52.0,125.3 53.0,125.6 54.0,126.4 55.0,127.2 56.0,127.3 57.0,126.4 58.0,126.4 59.0,127.5 60.0,125.4 61.0,126.4 62.0,125.9 63.0,127.2 64.0,127.1 65.0,127.7 66.0,126.8 67.0,127.0 68.0,126.6 69.0,126.8 70.0,125.6 71.0,125.4 72.0,127.3 73.0,126.7 74.0,127.3 75.0,126.0 76.0,125.2 77.0,127.2 78.0,125.8 79.0,127.0 80.0,127.7 81.0,125.8 82.0,126.8 83.0,127.3 84.0,126.6 85.0,127.1 86.0,126.7 87.0,66.3 88.0,1.0 89.0,1.0 89,129" fill="#e4eef6" stroke="none"/><polygon points="1,129 1.0,127.5 2.0,126.0 3.0,127.7 4.0,126.5 5.0,127.8 6.0,127.5 7.0,125.9 8.0,127.5 9.0,126.7 10.0,127.0 11.0,127.0 12.0,127.0 13.0,127.6 14.0,126.3 15.0,127.8 16.0,127.5 17.0,127.9 18.0,127.4 19.0,127.1 20.0,126.1 21.0,127.2 22.0,127.7 23.0,127.4 24.0,125.9 25.0,127.8 26.0,126.7 27.0,127.2 28.0,126.6 29.0,127.3 30.0,126.6 31.0,127.0 32.0,126.6 33.0,126.1 34.0,126.8 35.0,127.7 36.0,127.8 37.0,126.0 38.0,127.0 39.0,120.6 40.0,98.4 41.0,72.4 42.0,71.4 43.0,71.4 44.0,79.7 45.0,105.6 46.0,126.2 47.0,127.7 48.0,126.4 49.0,127.8 50.0,126.6 51.0,126.5 52.0,126.0 53.0,126.2 54.0,126.9 55.0,127.6 56.0,127.7 57.0,126.9 58.0,126.9 59.0,127.8 60.0,126.1 61.0,126.9 62.0,126.5 63.0,127.5 64.0,127.5 65.0,128.0 66.0,127.3 67.0,127.4 68.0,127.1 69.0,127.2 70.0,126.3 71.0,126.2 72.0,127.6 73.0,127.2 74.0,127.6 75.0,126.6 76.0,126.0 77.0,127.6 78.0,126.4 79.0,127.4 80.0,127.9 81.0,126.4 82.0,127.3 83.0,127.6 84.0,127.1 85.0,127.5 86.0,127.1 87.0,100.8 88.0,71.4 89.0,71.4 89,129" fill="#dbe8f2" stroke="none"/><g stroke="#c6ddee" stroke-width="1" opacity="0.85"><line x1="15.5" y1="1" x2="15.5" y2="129"/><line x1="30.5" y1="1" x2="30.5" y2="129"/><line x1="45.5" y1="1" x2="45.5" y2="129"/><line x1="60.5" y1="1" x2="60.5" y2="129"/><line x1="75.5" y1="1" x2="75.5" y2="129"/><line x1="1" y1="13.5" x2="89" y2="13.5"/><line x1="1" y1="26.5" x2="89" y2="26.5"/><line x1="1" y1="39.5" x2="89" y2="39.5"/><line x1="1" y1="52.5" x2="89" y2="52.5"/><line x1="1" y1="65.5" x2="89" y2="65.5"/><line x1="1" y1="78.5" x2="89" y2="78.5"/><line x1="1" y1="91.5" x2="89" y2="91.5"/><line x1="1" y1="104.5" x2="89" y2="104.5"/><line x1="1" y1="117.5" x2="89" y2="117.5"/></g><polyline points="1.0,127.5 2.0,126.0 3.0,127.7 4.0,126.5 5.0,127.8 6.0,127.5 7.0,125.9 8.0,127.5 9.0,126.7 10.0,127.0 11.0,127.0 12.0,127.0 13.0,127.6 14.0,126.3 15.0,127.8 16.0,127.5 17.0,127.9 18.0,127.4 19.0,127.1 20.0,126.1 21.0,127.2 22.0,127.7 23.0,127.4 24.0,125.9 25.0,127.8 26.0,126.7 27.0,127.2 28.0,126.6 29.0,127.3 30.0,126.6 31.0,127.0 32.0,126.6 33.0,126.1 34.0,126.8 35.0,127.7 36.0,127.8 37.0,126.0 38.0,127.0 39.0,120.6 40.0,98.4 41.0,72.4 42.0,71.4 43.0,71.4 44.0,79.7 45.0,105.6 46.0,126.2 47.0,127.7 48.0,126.4 49.0,127.8 50.0,126.6 51.0,126.5 52.0,126.0 53.0,126.2 54.0,126.9 55.0,127.6 56.0,127.7 57.0,126.9 58.0,126.9 59.0,127.8 60.0,126.1 61.0,126.9 62.0,126.5 63.0,127.5 64.0,127.5 65.0,128.0 66.0,127.3 67.0,127.4 68.0,127.1 69.0,127.2 70.0,126.3 71.0,126.2 72.0,127.6 73.0,127.2 74.0,127.6 75.0,126.6 76.0,126.0 77.0,127.6 78.0,126.4 79.0,127.4 80.0,127.9 81.0,126.4 82.0,127.3 83.0,127.6 84.0,127.1 85.0,127.5 86.0,127.1 87.0,100.8 88.0,71.4 89.0,71.4" fill="none" stroke="#6fa8d2" stroke-width="0.8" stroke-dasharray="2,1.5"/><polyline points="1.0,127.1 2.0,125.3 3.0,127.4 4.0,125.9 5.0,127.5 6.0,127.1 7.0,125.2 8.0,127.2 9.0,126.1 10.0,126.5 11.0,126.6 12.0,126.5 13.0,127.2 14.0,125.6 15.0,127.5 16.0,127.1 17.0,127.7 18.0,127.0 19.0,126.7 20.0,125.4 21.0,126.7 22.0,127.4 23.0,127.1 24.0,125.2 25.0,127.6 26.0,126.1 27.0,126.8 28.0,126.0 29.0,126.9 30.0,126.0 31.0,126.4 32.0,126.1 33.0,125.4 34.0,126.2 35.0,127.4 36.0,127.6 37.0,125.3 38.0,126.5 39.0,118.5 40.0,60.9 41.0,3.3 42.0,1.0 43.0,1.0 44.0,19.4 45.0,77.0 46.0,125.5 47.0,127.4 48.0,125.8 49.0,127.5 50.0,126.0 51.0,125.9 52.0,125.3 53.0,125.6 54.0,126.4 55.0,127.2 56.0,127.3 57.0,126.4 58.0,126.4 59.0,127.5 60.0,125.4 61.0,126.4 62.0,125.9 63.0,127.2 64.0,127.1 65.0,127.7 66.0,126.8 67.0,127.0 68.0,126.6 69.0,126.8 70.0,125.6 71.0,125.4 72.0,127.3 73.0,126.7 74.0,127.3 75.0,126.0 76.0,125.2 77.0,127.2 78.0,125.8 79.0,127.0 80.0,127.7 81.0,125.8 82.0,126.8 83.0,127.3 84.0,126.6 85.0,127.1 86.0,126.7 87.0,66.3 88.0,1.0 89.0,1.0" fill="none" stroke="#117dbb" stroke-width="1"/><rect x="0.5" y="0.5" width="89" height="129" fill="none" stroke="#117dbb" stroke-width="1"/></svg>
<svg class="a" style="left:1292px;top:402px" width="90" height="130" viewBox="0 0 90 130"><polygon points="1,129 1.0,122.2 2.0,122.8 3.0,124.3 4.0,119.6 5.0,125.1 6.0,121.9 7.0,119.4 8.0,124.6 9.0,121.6 10.0,121.2 11.0,124.9 12.0,122.7 13.0,120.7 14.0,122.3 15.0,120.5 16.0,124.2 17.0,123.6 18.0,124.4 19.0,121.9 20.0,119.2 21.0,121.4 22.0,120.2 23.0,122.7 24.0,120.4 25.0,124.5 26.0,123.3 27.0,120.8 28.0,120.5 29.0,122.5 30.0,124.6 31.0,123.5 32.0,123.8 33.0,123.4 34.0,120.0 35.0,123.9 36.0,119.5 37.0,119.5 38.0,115.1 39.0,83.2 40.0,42.9 41.0,2.6 42.0,1.0 43.0,1.0 44.0,13.9 45.0,54.2 46.0,94.5 47.0,121.5 48.0,119.4 49.0,123.9 50.0,125.1 51.0,124.6 52.0,121.7 53.0,125.0 54.0,124.6 55.0,122.0 56.0,119.3 57.0,122.5 58.0,122.6 59.0,121.1 60.0,124.6 61.0,121.4 62.0,124.1 63.0,121.3 64.0,119.0 65.0,124.8 66.0,119.6 67.0,112.4 68.0,106.8 69.0,114.1 70.0,118.8 71.0,118.8 72.0,124.4 73.0,120.6 74.0,119.1 75.0,123.6 76.0,121.2 77.0,124.9 78.0,122.8 79.0,120.8 80.0,121.4 81.0,120.2 82.0,124.6 83.0,122.9 84.0,119.6 85.0,121.4 86.0,95.8 87.0,39.4 88.0,1.0 89.0,1.0 89,129" fill="#e4eef6" stroke="none"/><polygon points="1,129 1.0,123.6 2.0,124.0 3.0,125.2 4.0,121.5 5.0,125.9 6.0,123.4 7.0,121.3 8.0,125.5 9.0,123.1 10.0,122.8 11.0,125.7 12.0,124.0 13.0,122.3 14.0,123.6 15.0,122.2 16.0,125.1 17.0,124.7 18.0,125.4 19.0,123.3 20.0,121.2 21.0,122.9 22.0,122.0 23.0,124.0 24.0,122.1 25.0,125.4 26.0,124.4 27.0,122.5 28.0,122.2 29.0,123.8 30.0,125.5 31.0,124.6 32.0,124.9 33.0,124.5 34.0,121.8 35.0,124.9 36.0,121.4 37.0,121.4 38.0,117.9 39.0,108.4 40.0,90.3 41.0,72.1 42.0,71.4 43.0,71.4 44.0,77.2 45.0,95.3 46.0,101.4 47.0,123.0 48.0,121.3 49.0,124.9 50.0,125.9 51.0,125.5 52.0,123.2 53.0,125.8 54.0,125.5 55.0,123.4 56.0,121.2 57.0,123.8 58.0,123.9 59.0,122.7 60.0,125.4 61.0,123.0 62.0,125.0 63.0,122.8 64.0,121.0 65.0,125.7 66.0,121.5 67.0,115.7 68.0,111.3 69.0,117.1 70.0,120.8 71.0,120.8 72.0,125.3 73.0,122.3 74.0,121.1 75.0,124.7 76.0,122.8 77.0,125.7 78.0,124.1 79.0,122.5 80.0,122.9 81.0,122.0 82.0,125.5 83.0,124.2 84.0,121.5 85.0,122.9 86.0,102.5 87.0,88.7 88.0,71.4 89.0,71.4 89,129" fill="#dbe8f2" stroke="none"/><g stroke="#c6ddee" stroke-width="1" opacity="0.85"><line x1="15.5" y1="1" x2="15.5" y2="129"/><line x1="30.5" y1="1" x2="30.5" y2="129"/><line x1="45.5" y1="1" x2="45.5" y2="129"/><line x1="60.5" y1="1" x2="60.5" y2="129"/><line x1="75.5" y1="1" x2="75.5" y2="129"/><line x1="1" y1="13.5" x2="89" y2="13.5"/><line x1="1" y1="26.5" x2="89" y2="26.5"/><line x1="1" y1="39.5" x2="89" y2="39.5"/><line x1="1" y1="52.5" x2="89" y2="52.5"/><line x1="1" y1="65.5" x2="89" y2="65.5"/><line x1="1" y1="78.5" x2="89" y2="78.5"/><line x1="1" y1="91.5" x2="89" y2="91.5"/><line x1="1" y1="104.5" x2="89" y2="104.5"/><line x1="1" y1="117.5" x2="89" y2="117.5"/></g><polyline points="1.0,123.6 2.0,124.0 3.0,125.2 4.0,121.5 5.0,125.9 6.0,123.4 7.0,121.3 8.0,125.5 9.0,123.1 10.0,122.8 11.0,125.7 12.0,124.0 13.0,122.3 14.0,123.6 15.0,122.2 16.0,125.1 17.0,124.7 18.0,125.4 19.0,123.3 20.0,121.2 21.0,122.9 22.0,122.0 23.0,124.0 24.0,122.1 25.0,125.4 26.0,124.4 27.0,122.5 28.0,122.2 29.0,123.8 30.0,125.5 31.0,124.6 32.0,124.9 33.0,124.5 34.0,121.8 35.0,124.9 36.0,121.4 37.0,121.4 38.0,117.9 39.0,108.4 40.0,90.3 41.0,72.1 42.0,71.4 43.0,71.4 44.0,77.2 45.0,95.3 46.0,101.4 47.0,123.0 48.0,121.3 49.0,124.9 50.0,125.9 51.0,125.5 52.0,123.2 53.0,125.8 54.0,125.5 55.0,123.4 56.0,121.2 57.0,123.8 58.0,123.9 59.0,122.7 60.0,125.4 61.0,123.0 62.0,125.0 63.0,122.8 64.0,121.0 65.0,125.7 66.0,121.5 67.0,115.7 68.0,111.3 69.0,117.1 70.0,120.8 71.0,120.8 72.0,125.3 73.0,122.3 74.0,121.1 75.0,124.7 76.0,122.8 77.0,125.7 78.0,124.1 79.0,122.5 80.0,122.9 81.0,122.0 82.0,125.5 83.0,124.2 84.0,121.5 85.0,122.9 86.0,102.5 87.0,88.7 88.0,71.4 89.0,71.4" fill="none" stroke="#6fa8d2" stroke-width="0.8" stroke-dasharray="2,1.5"/><polyline points="1.0,122.2 2.0,122.8 3.0,124.3 4.0,119.6 5.0,125.1 6.0,121.9 7.0,119.4 8.0,124.6 9.0,121.6 10.0,121.2 11.0,124.9 12.0,122.7 13.0,120.7 14.0,122.3 15.0,120.5 16.0,124.2 17.0,123.6 18.0,124.4 19.0,121.9 20.0,119.2 21.0,121.4 22.0,120.2 23.0,122.7 24.0,120.4 25.0,124.5 26.0,123.3 27.0,120.8 28.0,120.5 29.0,122.5 30.0,124.6 31.0,123.5 32.0,123.8 33.0,123.4 34.0,120.0 35.0,123.9 36.0,119.5 37.0,119.5 38.0,115.1 39.0,83.2 40.0,42.9 41.0,2.6 42.0,1.0 43.0,1.0 44.0,13.9 45.0,54.2 46.0,94.5 47.0,121.5 48.0,119.4 49.0,123.9 50.0,125.1 51.0,124.6 52.0,121.7 53.0,125.0 54.0,124.6 55.0,122.0 56.0,119.3 57.0,122.5 58.0,122.6 59.0,121.1 60.0,124.6 61.0,121.4 62.0,124.1 63.0,121.3 64.0,119.0 65.0,124.8 66.0,119.6 67.0,112.4 68.0,106.8 69.0,114.1 70.0,118.8 71.0,118.8 72.0,124.4 73.0,120.6 74.0,119.1 75.0,123.6 76.0,121.2 77.0,124.9 78.0,122.8 79.0,120.8 80.0,121.4 81.0,120.2 82.0,124.6 83.0,122.9 84.0,119.6 85.0,121.4 86.0,95.8 87.0,39.4 88.0,1.0 89.0,1.0" fill="none" stroke="#117dbb" stroke-width="1"/><rect x="0.5" y="0.5" width="89" height="129" fill="none" stroke="#117dbb" stroke-width="1"/></svg>
<svg class="a" style="left:1386px;top:402px" width="90" height="130" viewBox="0 0 90 130"><polygon points="1,129 1.0,123.5 2.0,124.2 3.0,123.5 4.0,125.4 5.0,122.3 6.0,122.2 7.0,123.1 8.0,125.6 9.0,123.8 10.0,124.8 11.0,125.2 12.0,121.6 13.0,121.3 14.0,126.2 15.0,122.0 16.0,123.4 17.0,124.5 18.0,125.0 19.0,123.0 20.0,124.1 21.0,122.9 22.0,123.1 23.0,125.8 24.0,122.5 25.0,121.4 26.0,121.5 27.0,123.3 28.0,126.2 29.0,126.4 30.0,125.8 31.0,121.6 32.0,124.9 33.0,124.6 34.0,121.8 35.0,124.8 36.0,123.6 37.0,124.2 38.0,124.8 39.0,84.1 40.0,43.4 41.0,2.6 42.0,1.0 43.0,1.0 44.0,14.0 45.0,54.8 46.0,95.5 47.0,123.1 48.0,123.7 49.0,122.1 50.0,125.7 51.0,123.5 52.0,124.5 53.0,123.4 54.0,125.9 55.0,122.5 56.0,125.9 57.0,125.6 58.0,122.3 59.0,121.6 60.0,124.2 61.0,124.3 62.0,125.2 63.0,125.0 64.0,123.3 65.0,125.5 66.0,125.8 67.0,124.1 68.0,125.6 69.0,123.1 70.0,122.2 71.0,122.5 72.0,124.0 73.0,124.7 74.0,124.2 75.0,126.4 76.0,122.8 77.0,124.7 78.0,124.8 79.0,126.0 80.0,124.1 81.0,123.5 82.0,124.4 83.0,122.0 84.0,123.0 85.0,125.2 86.0,96.8 87.0,39.8 88.0,1.0 89.0,1.0 89,129" fill="#e4eef6" stroke="none"/><polygon points="1,129 1.0,124.6 2.0,125.2 3.0,124.6 4.0,126.1 5.0,123.6 6.0,123.6 7.0,124.3 8.0,126.3 9.0,124.8 10.0,125.6 11.0,125.9 12.0,123.0 13.0,122.9 14.0,126.8 15.0,123.4 16.0,124.5 17.0,125.4 18.0,125.8 19.0,124.2 20.0,125.1 21.0,124.1 22.0,124.2 23.0,126.4 24.0,123.8 25.0,122.9 26.0,123.0 27.0,124.4 28.0,126.8 29.0,126.9 30.0,126.4 31.0,123.1 32.0,125.7 33.0,125.5 34.0,123.3 35.0,125.7 36.0,124.7 37.0,125.2 38.0,125.6 39.0,108.8 40.0,90.5 41.0,72.1 42.0,71.4 43.0,71.4 44.0,77.3 45.0,95.6 46.0,102.2 47.0,124.3 48.0,124.8 49.0,123.4 50.0,126.3 51.0,124.6 52.0,125.4 53.0,124.5 54.0,126.5 55.0,123.8 56.0,126.6 57.0,126.3 58.0,123.6 59.0,123.1 60.0,125.2 61.0,125.3 62.0,125.9 63.0,125.8 64.0,124.4 65.0,126.2 66.0,126.5 67.0,125.1 68.0,126.3 69.0,124.3 70.0,123.6 71.0,123.8 72.0,125.0 73.0,125.5 74.0,125.2 75.0,126.9 76.0,124.0 77.0,125.6 78.0,125.6 79.0,126.6 80.0,125.1 81.0,124.6 82.0,125.4 83.0,123.4 84.0,124.2 85.0,126.0 86.0,103.2 87.0,88.8 88.0,71.4 89.0,71.4 89,129" fill="#dbe8f2" stroke="none"/><g stroke="#c6ddee" stroke-width="1" opacity="0.85"><line x1="15.5" y1="1" x2="15.5" y2="129"/><line x1="30.5" y1="1" x2="30.5" y2="129"/><line x1="45.5" y1="1" x2="45.5" y2="129"/><line x1="60.5" y1="1" x2="60.5" y2="129"/><line x1="75.5" y1="1" x2="75.5" y2="129"/><line x1="1" y1="13.5" x2="89" y2="13.5"/><line x1="1" y1="26.5" x2="89" y2="26.5"/><line x1="1" y1="39.5" x2="89" y2="39.5"/><line x1="1" y1="52.5" x2="89" y2="52.5"/><line x1="1" y1="65.5" x2="89" y2="65.5"/><line x1="1" y1="78.5" x2="89" y2="78.5"/><line x1="1" y1="91.5" x2="89" y2="91.5"/><line x1="1" y1="104.5" x2="89" y2="104.5"/><line x1="1" y1="117.5" x2="89" y2="117.5"/></g><polyline points="1.0,124.6 2.0,125.2 3.0,124.6 4.0,126.1 5.0,123.6 6.0,123.6 7.0,124.3 8.0,126.3 9.0,124.8 10.0,125.6 11.0,125.9 12.0,123.0 13.0,122.9 14.0,126.8 15.0,123.4 16.0,124.5 17.0,125.4 18.0,125.8 19.0,124.2 20.0,125.1 21.0,124.1 22.0,124.2 23.0,126.4 24.0,123.8 25.0,122.9 26.0,123.0 27.0,124.4 28.0,126.8 29.0,126.9 30.0,126.4 31.0,123.1 32.0,125.7 33.0,125.5 34.0,123.3 35.0,125.7 36.0,124.7 37.0,125.2 38.0,125.6 39.0,108.8 40.0,90.5 41.0,72.1 42.0,71.4 43.0,71.4 44.0,77.3 45.0,95.6 46.0,102.2 47.0,124.3 48.0,124.8 49.0,123.4 50.0,126.3 51.0,124.6 52.0,125.4 53.0,124.5 54.0,126.5 55.0,123.8 56.0,126.6 57.0,126.3 58.0,123.6 59.0,123.1 60.0,125.2 61.0,125.3 62.0,125.9 63.0,125.8 64.0,124.4 65.0,126.2 66.0,126.5 67.0,125.1 68.0,126.3 69.0,124.3 70.0,123.6 71.0,123.8 72.0,125.0 73.0,125.5 74.0,125.2 75.0,126.9 76.0,124.0 77.0,125.6 78.0,125.6 79.0,126.6 80.0,125.1 81.0,124.6 82.0,125.4 83.0,123.4 84.0,124.2 85.0,126.0 86.0,103.2 87.0,88.8 88.0,71.4 89.0,71.4" fill="none" stroke="#6fa8d2" stroke-width="0.8" stroke-dasharray="2,1.5"/><polyline points="1.0,123.5 2.0,124.2 3.0,123.5 4.0,125.4 5.0,122.3 6.0,122.2 7.0,123.1 8.0,125.6 9.0,123.8 10.0,124.8 11.0,125.2 12.0,121.6 13.0,121.3 14.0,126.2 15.0,122.0 16.0,123.4 17.0,124.5 18.0,125.0 19.0,123.0 20.0,124.1 21.0,122.9 22.0,123.1 23.0,125.8 24.0,122.5 25.0,121.4 26.0,121.5 27.0,123.3 28.0,126.2 29.0,126.4 30.0,125.8 31.0,121.6 32.0,124.9 33.0,124.6 34.0,121.8 35.0,124.8 36.0,123.6 37.0,124.2 38.0,124.8 39.0,84.1 40.0,43.4 41.0,2.6 42.0,1.0 43.0,1.0 44.0,14.0 45.0,54.8 46.0,95.5 47.0,123.1 48.0,123.7 49.0,122.1 50.0,125.7 51.0,123.5 52.0,124.5 53.0,123.4 54.0,125.9 55.0,122.5 56.0,125.9 57.0,125.6 58.0,122.3 59.0,121.6 60.0,124.2 61.0,124.3 62.0,125.2 63.0,125.0 64.0,123.3 65.0,125.5 66.0,125.8 67.0,124.1 68.0,125.6 69.0,123.1 70.0,122.2 71.0,122.5 72.0,124.0 73.0,124.7 74.0,124.2 75.0,126.4 76.0,122.8 77.0,124.7 78.0,124.8 79.0,126.0 80.0,124.1 81.0,123.5 82.0,124.4 83.0,122.0 84.0,123.0 85.0,125.2 86.0,96.8 87.0,39.8 88.0,1.0 89.0,1.0" fill="none" stroke="#117dbb" stroke-width="1"/><rect x="0.5" y="0.5" width="89" height="129" fill="none" stroke="#117dbb" stroke-width="1"/></svg>
<svg class="a" style="left:1480px;top:402px" width="90" height="130" viewBox="0 0 90 130"><polygon points="1,129 1.0,121.7 2.0,120.9 3.0,118.1 4.0,121.6 5.0,121.3 6.0,120.6 7.0,123.7 8.0,121.2 9.0,120.3 10.0,119.1 11.0,124.4 12.0,122.8 13.0,124.5 14.0,118.9 15.0,119.8 16.0,124.8 17.0,117.6 18.0,117.8 19.0,120.1 20.0,120.4 21.0,124.0 22.0,125.0 23.0,121.1 24.0,124.7 25.0,123.7 26.0,123.3 27.0,124.9 28.0,121.6 29.0,121.8 30.0,118.7 31.0,121.2 32.0,120.2 33.0,121.3 34.0,120.1 35.0,121.5 36.0,114.9 37.0,117.5 38.0,117.5 39.0,83.2 40.0,42.9 41.0,2.6 42.0,1.0 43.0,1.0 44.0,13.9 45.0,54.2 46.0,94.5 47.0,118.7 48.0,122.2 49.0,117.8 50.0,118.7 51.0,125.2 52.0,123.5 53.0,118.2 54.0,121.6 55.0,117.6 56.0,122.1 57.0,124.6 58.0,120.3 59.0,119.2 60.0,123.1 61.0,124.5 62.0,122.6 63.0,117.8 64.0,119.3 65.0,115.6 66.0,109.3 67.0,114.1 68.0,120.4 69.0,119.0 70.0,123.8 71.0,120.9 72.0,121.7 73.0,123.7 74.0,119.5 75.0,124.2 76.0,120.2 77.0,124.3 78.0,121.9 79.0,123.5 80.0,123.1 81.0,117.7 82.0,119.0 83.0,122.8 84.0,118.4 85.0,123.5 86.0,95.8 87.0,39.4 88.0,1.0 89.0,1.0 89,129" fill="#e4eef6" stroke="none"/><polygon points="1,129 1.0,123.1 2.0,122.5 3.0,120.2 4.0,123.1 5.0,122.8 6.0,122.3 7.0,124.8 8.0,122.8 9.0,122.1 10.0,121.1 11.0,125.3 12.0,124.1 13.0,125.4 14.0,121.0 15.0,121.7 16.0,125.7 17.0,119.9 18.0,120.0 19.0,121.9 20.0,122.1 21.0,125.0 22.0,125.8 23.0,122.7 24.0,125.6 25.0,124.8 26.0,124.4 27.0,125.7 28.0,123.1 29.0,123.2 30.0,120.8 31.0,122.7 32.0,122.0 33.0,122.9 34.0,121.9 35.0,123.0 36.0,117.8 37.0,119.8 38.0,119.8 39.0,108.4 40.0,90.3 41.0,72.1 42.0,71.4 43.0,71.4 44.0,77.2 45.0,95.3 46.0,101.4 47.0,120.7 48.0,123.6 49.0,120.0 50.0,120.7 51.0,125.9 52.0,124.6 53.0,120.3 54.0,123.0 55.0,119.9 56.0,123.5 57.0,125.5 58.0,122.1 59.0,121.1 60.0,124.3 61.0,125.4 62.0,123.9 63.0,120.0 64.0,121.3 65.0,118.3 66.0,113.2 67.0,117.1 68.0,122.1 69.0,121.0 70.0,124.8 71.0,122.5 72.0,123.2 73.0,124.8 74.0,121.4 75.0,125.1 76.0,122.0 77.0,125.2 78.0,123.3 79.0,124.6 80.0,124.3 81.0,120.0 82.0,121.0 83.0,124.1 84.0,120.5 85.0,124.6 86.0,102.5 87.0,88.7 88.0,71.4 89.0,71.4 89,129" fill="#dbe8f2" stroke="none"/><g stroke="#c6ddee" stroke-width="1" opacity="0.85"><line x1="15.5" y1="1" x2="15.5" y2="129"/><line x1="30.5" y1="1" x2="30.5" y2="129"/><line x1="45.5" y1="1" x2="45.5" y2="129"/><line x1="60.5" y1="1" x2="60.5" y2="129"/><line x1="75.5" y1="1" x2="75.5" y2="129"/><line x1="1" y1="13.5" x2="89" y2="13.5"/><line x1="1" y1="26.5" x2="89" y2="26.5"/><line x1="1" y1="39.5" x2="89" y2="39.5"/><line x1="1" y1="52.5" x2="89" y2="52.5"/><line x1="1" y1="65.5" x2="89" y2="65.5"/><line x1="1" y1="78.5" x2="89" y2="78.5"/><line x1="1" y1="91.5" x2="89" y2="91.5"/><line x1="1" y1="104.5" x2="89" y2="104.5"/><line x1="1" y1="117.5" x2="89" y2="117.5"/></g><polyline points="1.0,123.1 2.0,122.5 3.0,120.2 4.0,123.1 5.0,122.8 6.0,122.3 7.0,124.8 8.0,122.8 9.0,122.1 10.0,121.1 11.0,125.3 12.0,124.1 13.0,125.4 14.0,121.0 15.0,121.7 16.0,125.7 17.0,119.9 18.0,120.0 19.0,121.9 20.0,122.1 21.0,125.0 22.0,125.8 23.0,122.7 24.0,125.6 25.0,124.8 26.0,124.4 27.0,125.7 28.0,123.1 29.0,123.2 30.0,120.8 31.0,122.7 32.0,122.0 33.0,122.9 34.0,121.9 35.0,123.0 36.0,117.8 37.0,119.8 38.0,119.8 39.0,108.4 40.0,90.3 41.0,72.1 42.0,71.4 43.0,71.4 44.0,77.2 45.0,95.3 46.0,101.4 47.0,120.7 48.0,123.6 49.0,120.0 50.0,120.7 51.0,125.9 52.0,124.6 53.0,120.3 54.0,123.0 55.0,119.9 56.0,123.5 57.0,125.5 58.0,122.1 59.0,121.1 60.0,124.3 61.0,125.4 62.0,123.9 63.0,120.0 64.0,121.3 65.0,118.3 66.0,113.2 67.0,117.1 68.0,122.1 69.0,121.0 70.0,124.8 71.0,122.5 72.0,123.2 73.0,124.8 74.0,121.4 75.0,125.1 76.0,122.0 77.0,125.2 78.0,123.3 79.0,124.6 80.0,124.3 81.0,120.0 82.0,121.0 83.0,124.1 84.0,120.5 85.0,124.6 86.0,102.5 87.0,88.7 88.0,71.4 89.0,71.4" fill="none" stroke="#6fa8d2" stroke-width="0.8" stroke-dasharray="2,1.5"/><polyline points="1.0,121.7 2.0,120.9 3.0,118.1 4.0,121.6 5.0,121.3 6.0,120.6 7.0,123.7 8.0,121.2 9.0,120.3 10.0,119.1 11.0,124.4 12.0,122.8 13.0,124.5 14.0,118.9 15.0,119.8 16.0,124.8 17.0,117.6 18.0,117.8 19.0,120.1 20.0,120.4 21.0,124.0 22.0,125.0 23.0,121.1 24.0,124.7 25.0,123.7 26.0,123.3 27.0,124.9 28.0,121.6 29.0,121.8 30.0,118.7 31.0,121.2 32.0,120.2 33.0,121.3 34.0,120.1 35.0,121.5 36.0,114.9 37.0,117.5 38.0,117.5 39.0,83.2 40.0,42.9 41.0,2.6 42.0,1.0 43.0,1.0 44.0,13.9 45.0,54.2 46.0,94.5 47.0,118.7 48.0,122.2 49.0,117.8 50.0,118.7 51.0,125.2 52.0,123.5 53.0,118.2 54.0,121.6 55.0,117.6 56.0,122.1 57.0,124.6 58.0,120.3 59.0,119.2 60.0,123.1 61.0,124.5 62.0,122.6 63.0,117.8 64.0,119.3 65.0,115.6 66.0,109.3 67.0,114.1 68.0,120.4 69.0,119.0 70.0,123.8 71.0,120.9 72.0,121.7 73.0,123.7 74.0,119.5 75.0,124.2 76.0,120.2 77.0,124.3 78.0,121.9 79.0,123.5 80.0,123.1 81.0,117.7 82.0,119.0 83.0,122.8 84.0,118.4 85.0,123.5 86.0,95.8 87.0,39.4 88.0,1.0 89.0,1.0" fill="none" stroke="#117dbb" stroke-width="1"/><rect x="0.5" y="0.5" width="89" height="129" fill="none" stroke="#117dbb" stroke-width="1"/></svg>
<svg class="a" style="left:1574px;top:402px" width="90" height="130" viewBox="0 0 90 130"><polygon points="1,129 1.0,125.9 2.0,125.2 3.0,125.2 4.0,127.2 5.0,127.7 6.0,126.3 7.0,126.7 8.0,124.6 9.0,125.1 10.0,125.4 11.0,125.6 12.0,125.2 13.0,127.2 14.0,126.0 15.0,127.1 16.0,124.2 17.0,125.3 18.0,110.0 19.0,106.9 20.0,122.2 21.0,126.4 22.0,126.2 23.0,124.5 24.0,127.6 25.0,127.5 26.0,124.2 27.0,125.8 28.0,127.4 29.0,123.9 30.0,124.1 31.0,127.3 32.0,126.1 33.0,127.2 34.0,126.5 35.0,125.3 36.0,127.1 37.0,125.0 38.0,127.5 39.0,118.5 40.0,60.9 41.0,3.3 42.0,1.0 43.0,1.0 44.0,19.4 45.0,77.0 46.0,127.6 47.0,124.9 48.0,124.0 49.0,124.0 50.0,125.2 51.0,126.4 52.0,126.3 53.0,125.1 54.0,125.1 55.0,127.3 56.0,126.8 57.0,126.3 58.0,125.8 59.0,124.6 60.0,125.8 61.0,127.6 62.0,124.6 63.0,123.6 64.0,113.5 65.0,116.3 66.0,126.1 67.0,126.2 68.0,124.8 69.0,116.3 70.0,113.5 71.0,123.6 72.0,125.0 73.0,127.6 74.0,126.7 75.0,126.4 76.0,125.3 77.0,127.5 78.0,126.0 79.0,126.9 80.0,126.6 81.0,125.9 82.0,124.0 83.0,125.9 84.0,124.0 85.0,127.1 86.0,124.2 87.0,66.3 88.0,1.0 89.0,1.0 89,129" fill="#e4eef6" stroke="none"/><polygon points="1,129 1.0,126.5 2.0,126.0 3.0,125.9 4.0,127.5 5.0,127.9 6.0,126.8 7.0,127.1 8.0,125.5 9.0,125.9 10.0,126.1 11.0,126.3 12.0,125.9 13.0,127.5 14.0,126.6 15.0,127.5 16.0,125.2 17.0,126.0 18.0,113.8 19.0,111.4 20.0,123.6 21.0,126.9 22.0,126.7 23.0,125.4 24.0,127.9 25.0,127.8 26.0,125.2 27.0,126.4 28.0,127.7 29.0,124.9 30.0,125.1 31.0,127.6 32.0,126.7 33.0,127.6 34.0,127.0 35.0,126.1 36.0,127.5 37.0,125.8 38.0,127.8 39.0,120.6 40.0,98.4 41.0,72.4 42.0,71.4 43.0,71.4 44.0,79.7 45.0,105.6 46.0,127.9 47.0,125.7 48.0,125.0 49.0,125.0 50.0,125.9 51.0,126.9 52.0,126.9 53.0,125.9 54.0,125.9 55.0,127.6 56.0,127.3 57.0,126.9 58.0,126.4 59.0,125.5 60.0,126.4 61.0,127.9 62.0,125.4 63.0,124.7 64.0,116.6 65.0,118.9 66.0,126.7 67.0,126.8 68.0,125.6 69.0,118.9 70.0,116.6 71.0,124.7 72.0,125.8 73.0,127.9 74.0,127.1 75.0,126.9 76.0,126.0 77.0,127.8 78.0,126.6 79.0,127.3 80.0,127.1 81.0,126.5 82.0,125.0 83.0,126.5 84.0,125.0 85.0,127.5 86.0,125.1 87.0,100.8 88.0,71.4 89.0,71.4 89,129" fill="#dbe8f2" stroke="none"/><g stroke="#c6ddee" stroke-width="1" opacity="0.85"><line x1="15.5" y1="1" x2="15.5" y2="129"/><line x1="30.5" y1="1" x2="30.5" y2="129"/><line x1="45.5" y1="1" x2="45.5" y2="129"/><line x1="60.5" y1="1" x2="60.5" y2="129"/><line x1="75.5" y1="1" x2="75.5" y2="129"/><line x1="1" y1="13.5" x2="89" y2="13.5"/><line x1="1" y1="26.5" x2="89" y2="26.5"/><line x1="1" y1="39.5" x2="89" y2="39.5"/><line x1="1" y1="52.5" x2="89" y2="52.5"/><line x1="1" y1="65.5" x2="89" y2="65.5"/><line x1="1" y1="78.5" x2="89" y2="78.5"/><line x1="1" y1="91.5" x2="89" y2="91.5"/><line x1="1" y1="104.5" x2="89" y2="104.5"/><line x1="1" y1="117.5" x2="89" y2="117.5"/></g><polyline points="1.0,126.5 2.0,126.0 3.0,125.9 4.0,127.5 5.0,127.9 6.0,126.8 7.0,127.1 8.0,125.5 9.0,125.9 10.0,126.1 11.0,126.3 12.0,125.9 13.0,127.5 14.0,126.6 15.0,127.5 16.0,125.2 17.0,126.0 18.0,113.8 19.0,111.4 20.0,123.6 21.0,126.9 22.0,126.7 23.0,125.4 24.0,127.9 25.0,127.8 26.0,125.2 27.0,126.4 28.0,127.7 29.0,124.9 30.0,125.1 31.0,127.6 32.0,126.7 33.0,127.6 34.0,127.0 35.0,126.1 36.0,127.5 37.0,125.8 38.0,127.8 39.0,120.6 40.0,98.4 41.0,72.4 42.0,71.4 43.0,71.4 44.0,79.7 45.0,105.6 46.0,127.9 47.0,125.7 48.0,125.0 49.0,125.0 50.0,125.9 51.0,126.9 52.0,126.9 53.0,125.9 54.0,125.9 55.0,127.6 56.0,127.3 57.0,126.9 58.0,126.4 59.0,125.5 60.0,126.4 61.0,127.9 62.0,125.4 63.0,124.7 64.0,116.6 65.0,118.9 66.0,126.7 67.0,126.8 68.0,125.6 69.0,118.9 70.0,116.6 71.0,124.7 72.0,125.8 73.0,127.9 74.0,127.1 75.0,126.9 76.0,126.0 77.0,127.8 78.0,126.6 79.0,127.3 80.0,127.1 81.0,126.5 82.0,125.0 83.0,126.5 84.0,125.0 85.0,127.5 86.0,125.1 87.0,100.8 88.0,71.4 89.0,71.4" fill="none" stroke="#6fa8d2" stroke-width="0.8" stroke-dasharray="2,1.5"/><polyline points="1.0,125.9 2.0,125.2 3.0,125.2 4.0,127.2 5.0,127.7 6.0,126.3 7.0,126.7 8.0,124.6 9.0,125.1 10.0,125.4 11.0,125.6 12.0,125.2 13.0,127.2 14.0,126.0 15.0,127.1 16.0,124.2 17.0,125.3 18.0,110.0 19.0,106.9 20.0,122.2 21.0,126.4 22.0,126.2 23.0,124.5 24.0,127.6 25.0,127.5 26.0,124.2 27.0,125.8 28.0,127.4 29.0,123.9 30.0,124.1 31.0,127.3 32.0,126.1 33.0,127.2 34.0,126.5 35.0,125.3 36.0,127.1 37.0,125.0 38.0,127.5 39.0,118.5 40.0,60.9 41.0,3.3 42.0,1.0 43.0,1.0 44.0,19.4 45.0,77.0 46.0,127.6 47.0,124.9 48.0,124.0 49.0,124.0 50.0,125.2 51.0,126.4 52.0,126.3 53.0,125.1 54.0,125.1 55.0,127.3 56.0,126.8 57.0,126.3 58.0,125.8 59.0,124.6 60.0,125.8 61.0,127.6 62.0,124.6 63.0,123.6 64.0,113.5 65.0,116.3 66.0,126.1 67.0,126.2 68.0,124.8 69.0,116.3 70.0,113.5 71.0,123.6 72.0,125.0 73.0,127.6 74.0,126.7 75.0,126.4 76.0,125.3 77.0,127.5 78.0,126.0 79.0,126.9 80.0,126.6 81.0,125.9 82.0,124.0 83.0,125.9 84.0,124.0 85.0,127.1 86.0,124.2 87.0,66.3 88.0,1.0 89.0,1.0" fill="none" stroke="#117dbb" stroke-width="1"/><rect x="0.5" y="0.5" width="89" height="129" fill="none" stroke="#117dbb" stroke-width="1"/></svg>
<svg class="a" style="left:1092px;top:82px" width="60" height="40"><polygon points="1,39 1.0,39.0 2.0,39.0 3.0,39.0 3.9,39.0 4.9,39.0 5.9,39.0 6.9,39.0 7.9,39.0 8.9,39.0 9.8,36.7 10.8,37.1 11.8,36.4 12.8,34.9 13.8,32.2 14.8,35.0 15.7,36.7 16.7,36.7 17.7,37.0 18.7,35.2 19.7,35.7 20.7,35.4 21.6,35.9 22.6,37.0 23.6,36.5 24.6,36.2 25.6,26.1 26.6,12.5 27.5,1.0 28.5,1.0 29.5,6.2 30.5,19.8 31.5,33.4 32.5,36.2 33.4,36.1 34.4,36.4 35.4,36.2 36.4,36.7 37.4,37.0 38.4,35.5 39.3,36.7 40.3,35.6 41.3,36.7 42.3,34.8 43.3,31.6 44.3,30.6 45.2,33.8 46.2,36.0 47.2,35.7 48.2,36.9 49.2,36.2 50.2,35.5 51.1,36.7 52.1,35.3 53.1,35.4 54.1,36.3 55.1,34.4 56.1,14.1 57.0,1.0 58.0,4.7 59.0,35.2 59,39" fill="#f1f6fa" stroke="none"/><polyline points="1.0,39.0 2.0,39.0 3.0,39.0 3.9,39.0 4.9,39.0 5.9,39.0 6.9,39.0 7.9,39.0 8.9,39.0 9.8,36.7 10.8,37.1 11.8,36.4 12.8,34.9 13.8,32.2 14.8,35.0 15.7,36.7 16.7,36.7 17.7,37.0 18.7,35.2 19.7,35.7 20.7,35.4 21.6,35.9 22.6,37.0 23.6,36.5 24.6,36.2 25.6,26.1 26.6,12.5 27.5,1.0 28.5,1.0 29.5,6.2 30.5,19.8 31.5,33.4 32.5,36.2 33.4,36.1 34.4,36.4 35.4,36.2 36.4,36.7 37.4,37.0 38.4,35.5 39.3,36.7 40.3,35.6 41.3,36.7 42.3,34.8 43.3,31.6 44.3,30.6 45.2,33.8 46.2,36.0 47.2,35.7 48.2,36.9 49.2,36.2 50.2,35.5 51.1,36.7 52.1,35.3 53.1,35.4 54.1,36.3 55.1,34.4 56.1,14.1 57.0,1.0 58.0,4.7 59.0,35.2" fill="none" stroke="#117dbb" stroke-width="1"/><rect x="0.5" y="0.5" width="59" height="39" fill="none" stroke="#117dbb"/></svg>
<svg class="a" style="left:1092px;top:142px" width="60" height="40"><rect x="1" y="31" width="58" height="8" fill="#f2eef3"/><line x1="1" y1="31.5" x2="59" y2="31.5" stroke="#8b12ae"/><rect x="0.5" y="0.5" width="59" height="39" fill="none" stroke="#8b12ae"/></svg>
<svg class="a" style="left:1092px;top:400px" width="60" height="45"><polygon points="1,44 1.0,43.7 2.0,43.7 3.0,43.7 3.9,43.6 4.9,43.7 5.9,43.6 6.9,43.3 7.9,36.0 8.9,42.1 9.8,43.7 10.8,43.6 11.8,44.0 12.8,43.8 13.8,43.9 14.8,43.8 15.7,43.8 16.7,42.7 17.7,24.7 18.7,17.4 19.7,35.5 20.7,43.7 21.6,43.9 22.6,43.7 23.6,43.9 24.6,43.7 25.6,43.9 26.6,44.0 27.5,42.7 28.5,41.3 29.5,41.9 30.5,18.6 31.5,10.2 32.5,33.5 33.4,43.6 34.4,43.8 35.4,43.7 36.4,43.9 37.4,43.6 38.4,43.7 39.3,43.6 40.3,43.6 41.3,37.6 42.3,40.5 43.3,43.9 44.3,43.9 45.2,42.5 46.2,33.4 47.2,42.2 48.2,44.0 49.2,39.0 50.2,38.1 51.1,43.9 52.1,43.6 53.1,43.8 54.1,28.3 55.1,18.2 56.1,32.8 57.0,44.0 58.0,43.6 59.0,44.0 59,44" fill="#fcf3eb" stroke="none"/><polyline points="1.0,43.7 2.0,43.7 3.0,43.7 3.9,43.6 4.9,43.7 5.9,43.6 6.9,43.3 7.9,36.0 8.9,42.1 9.8,43.7 10.8,43.6 11.8,44.0 12.8,43.8 13.8,43.9 14.8,43.8 15.7,43.8 16.7,42.7 17.7,24.7 18.7,17.4 19.7,35.5 20.7,43.7 21.6,43.9 22.6,43.7 23.6,43.9 24.6,43.7 25.6,43.9 26.6,44.0 27.5,42.7 28.5,41.3 29.5,41.9 30.5,18.6 31.5,10.2 32.5,33.5 33.4,43.6 34.4,43.8 35.4,43.7 36.4,43.9 37.4,43.6 38.4,43.7 39.3,43.6 40.3,43.6 41.3,37.6 42.3,40.5 43.3,43.9 44.3,43.9 45.2,42.5 46.2,33.4 47.2,42.2 48.2,44.0 49.2,39.0 50.2,38.1 51.1,43.9 52.1,43.6 53.1,43.8 54.1,28.3 55.1,18.2 56.1,32.8 57.0,44.0 58.0,43.6 59.0,44.0" fill="none" stroke="#a74f01" stroke-width="1"/><rect x="0.5" y="0.5" width="59" height="44" fill="none" stroke="#a74f01"/></svg>
<svg class="a" style="left:1092px;top:532px" width="60" height="45"><polygon points="1,44 1.0,43.0 2.0,41.1 3.0,43.2 3.9,41.8 4.9,43.4 5.9,42.9 6.9,41.0 7.9,43.0 8.9,41.9 9.8,42.4 10.8,42.4 11.8,42.3 12.8,43.1 13.8,41.4 14.8,43.3 15.7,43.0 16.7,43.5 17.7,42.9 18.7,42.5 19.7,41.2 20.7,42.6 21.6,43.3 22.6,42.9 23.6,41.0 24.6,43.4 25.6,42.0 26.6,42.6 27.5,43.6 28.5,43.6 29.5,43.6 30.5,43.6 31.5,43.6 32.5,43.6 33.4,43.6 34.4,43.6 35.4,43.6 36.4,43.6 37.4,43.6 38.4,43.6 39.3,43.6 40.3,43.6 41.3,43.6 42.3,43.6 43.3,43.6 44.3,43.6 45.2,43.6 46.2,43.6 47.2,43.6 48.2,43.3 49.2,41.8 50.2,41.8 51.1,41.1 52.1,41.4 53.1,42.3 54.1,43.1 55.1,43.2 56.1,42.2 57.0,42.3 58.0,43.4 59.0,41.2 59,44" fill="#f1f6fa" stroke="none"/><polyline points="1.0,43.0 2.0,41.1 3.0,43.2 3.9,41.8 4.9,43.4 5.9,42.9 6.9,41.0 7.9,43.0 8.9,41.9 9.8,42.4 10.8,42.4 11.8,42.3 12.8,43.1 13.8,41.4 14.8,43.3 15.7,43.0 16.7,43.5 17.7,42.9 18.7,42.5 19.7,41.2 20.7,42.6 21.6,43.3 22.6,42.9 23.6,41.0 24.6,43.4 25.6,42.0 26.6,42.6 27.5,43.6 28.5,43.6 29.5,43.6 30.5,43.6 31.5,43.6 32.5,43.6 33.4,43.6 34.4,43.6 35.4,43.6 36.4,43.6 37.4,43.6 38.4,43.6 39.3,43.6 40.3,43.6 41.3,43.6 42.3,43.6 43.3,43.6 44.3,43.6 45.2,43.6 46.2,43.6 47.2,43.6 48.2,43.3 49.2,41.8 50.2,41.8 51.1,41.1 52.1,41.4 53.1,42.3 54.1,43.1 55.1,43.2 56.1,42.2 57.0,42.3 58.0,43.4 59.0,41.2" fill="none" stroke="#117dbb" stroke-width="1"/><rect x="0.5" y="0.5" width="59" height="44" fill="none" stroke="#117dbb"/></svg>
<svg class="a" style="left:1092px;top:598px" width="60" height="45"><polygon points="1,44 1.0,42.6 2.0,42.8 3.0,43.3 3.9,41.7 4.9,43.6 5.9,42.5 6.9,41.6 7.9,43.4 8.9,42.4 9.8,42.2 10.8,43.5 11.8,42.8 12.8,42.1 13.8,42.6 14.8,42.0 15.7,43.2 16.7,43.1 17.7,43.3 18.7,42.5 19.7,41.6 20.7,42.3 21.6,41.9 22.6,42.7 23.6,42.0 24.6,43.4 25.6,42.9 26.6,42.1 27.5,42.0 28.5,42.7 29.5,39.6 30.5,39.6 31.5,42.7 32.5,43.0 33.4,41.8 34.4,43.1 35.4,41.7 36.4,41.7 37.4,43.5 38.4,42.8 39.3,42.5 40.3,43.5 41.3,42.7 42.3,41.6 43.3,43.3 44.3,42.3 45.2,43.3 46.2,42.3 47.2,41.6 48.2,43.1 49.2,43.6 50.2,43.4 51.1,42.4 52.1,43.5 53.1,43.4 54.1,42.5 55.1,41.6 56.1,42.7 57.0,42.7 58.0,42.2 59.0,43.4 59,44" fill="#f1f6fa" stroke="none"/><polyline points="1.0,42.6 2.0,42.8 3.0,43.3 3.9,41.7 4.9,43.6 5.9,42.5 6.9,41.6 7.9,43.4 8.9,42.4 9.8,42.2 10.8,43.5 11.8,42.8 12.8,42.1 13.8,42.6 14.8,42.0 15.7,43.2 16.7,43.1 17.7,43.3 18.7,42.5 19.7,41.6 20.7,42.3 21.6,41.9 22.6,42.7 23.6,42.0 24.6,43.4 25.6,42.9 26.6,42.1 27.5,42.0 28.5,42.7 29.5,39.6 30.5,39.6 31.5,42.7 32.5,43.0 33.4,41.8 34.4,43.1 35.4,41.7 36.4,41.7 37.4,43.5 38.4,42.8 39.3,42.5 40.3,43.5 41.3,42.7 42.3,41.6 43.3,43.3 44.3,42.3 45.2,43.3 46.2,42.3 47.2,41.6 48.2,43.1 49.2,43.6 50.2,43.4 51.1,42.4 52.1,43.5 53.1,43.4 54.1,42.5 55.1,41.6 56.1,42.7 57.0,42.7 58.0,42.2 59.0,43.4" fill="none" stroke="#117dbb" stroke-width="1"/><rect x="0.5" y="0.5" width="59" height="44" fill="none" stroke="#117dbb"/></svg>
<div class="t" style="top:558.9px;font-size:11.6px;color:#6d6d6d;left:1290.5px;">Utilization</div>
<div class="t" style="top:558.9px;font-size:11.6px;color:#6d6d6d;left:1363.4px;">Speed</div>
<div class="t" style="top:579.0px;font-size:18.4px;color:#000;left:1290.5px;letter-spacing:0.4px;">100%</div>
<div class="t" style="top:579.0px;font-size:18.4px;color:#000;left:1363.4px;letter-spacing:0.4px;">4.29 GHz</div>
<div class="t" style="top:610.2px;font-size:11.6px;color:#6d6d6d;left:1290.5px;">Processes</div>
<div class="t" style="top:610.2px;font-size:11.6px;color:#6d6d6d;left:1361.3px;">Threads</div>
<div class="t" style="top:610.2px;font-size:11.6px;color:#6d6d6d;left:1425.5px;">Handles</div>
<div class="t" style="top:630.2px;font-size:18.4px;color:#000;left:1290.5px;letter-spacing:0.4px;">310</div>
<div class="t" style="top:630.2px;font-size:18.4px;color:#000;left:1361.3px;letter-spacing:0.4px;">4223</div>
<div class="t" style="top:630.2px;font-size:18.4px;color:#000;left:1425.5px;letter-spacing:0.4px;">143725</div>
<div class="t" style="top:660.7px;font-size:11.6px;color:#6d6d6d;left:1290.5px;">Up time</div>
<div class="t" style="top:680.4px;font-size:18.4px;color:#000;left:1290.5px;letter-spacing:0.4px;">0:02:11:34</div>
<div class="t" style="top:558.9px;font-size:11.6px;color:#6d6d6d;left:1503.5px;">Base speed:</div>
<div class="t" style="top:558.9px;font-size:11.6px;color:#000;left:1616.7px;">3.70 GHz</div>
<div class="t" style="top:576.9px;font-size:11.6px;color:#6d6d6d;left:1503.5px;">Sockets:</div>
<div class="t" style="top:576.9px;font-size:11.6px;color:#000;left:1616.7px;">1</div>
<div class="t" style="top:594.9px;font-size:11.6px;color:#6d6d6d;left:1503.5px;">Cores:</div>
<div class="t" style="top:594.9px;font-size:11.6px;color:#000;left:1616.7px;">6</div>
<div class="t" style="top:612.9px;font-size:11.6px;color:#6d6d6d;left:1503.5px;">Logical processors:</div>
<div class="t" style="top:612.9px;font-size:11.6px;color:#000;left:1616.7px;">12</div>
<div class="t" style="top:630.9px;font-size:11.6px;color:#6d6d6d;left:1503.5px;">Virtualization:</div>
<div class="t" style="top:630.9px;font-size:11.6px;color:#000;left:1616.7px;">Enabled</div>
<div class="t" style="top:648.9px;font-size:11.6px;color:#6d6d6d;left:1503.5px;">L1 cache:</div>
<div class="t" style="top:648.9px;font-size:11.6px;color:#000;left:1616.7px;">384 KB</div>
<div class="t" style="top:666.9px;font-size:11.6px;color:#6d6d6d;left:1503.5px;">L2 cache:</div>
<div class="t" style="top:666.9px;font-size:11.6px;color:#000;left:1616.7px;">1.5 MB</div>
<div class="t" style="top:684.9px;font-size:11.6px;color:#6d6d6d;left:1503.5px;">L3 cache:</div>
<div class="t" style="top:684.9px;font-size:11.6px;color:#000;left:1616.7px;">12.0 MB</div>
<div class="a" style="left:1287px;top:723px;width:396px;height:15px;background:#f0f0f0;"></div>
<div class="a" style="left:1305px;top:724px;width:355px;height:13px;background:#cdcdcd;"></div>
<svg class="a" style="left:1287px;top:723px" width="396" height="15"><path d="M12 4 L8 7.5 L12 11" fill="none" stroke="#606060" stroke-width="1.5"/><path d="M385 4 L389 7.5 L385 11" fill="none" stroke="#606060" stroke-width="1.5"/></svg>
<svg class="a" style="left:1080px;top:748px" width="140" height="30"><circle cx="15.2" cy="14.5" r="9" fill="none" stroke="#8a8a8a" stroke-width="1"/><path d="M10.5 16.5 L15.2 11.8 L19.9 16.5" fill="none" stroke="#8a8a8a" stroke-width="1"/><rect x="108" y="7" width="1" height="14" fill="#d0d0d0"/><circle cx="124.6" cy="14" r="8" fill="#eee" stroke="#555" stroke-width="1.2"/><path d="M121 9 L127 18" stroke="#c00" stroke-width="1.6"/><path d="M127 9 A6 6 0 0 1 130 14" stroke="#e98b1e" stroke-width="1.5" fill="none"/></svg>
<div class="t" style="top:757.7px;font-size:11.6px;color:#1a1a1a;left:1112.4px;">Fewer details</div>
<div class="t" style="top:757.5px;font-size:11.8px;color:#1e6cc5;left:1218.6px;">Open Resource Monitor</div>
</body></html>
